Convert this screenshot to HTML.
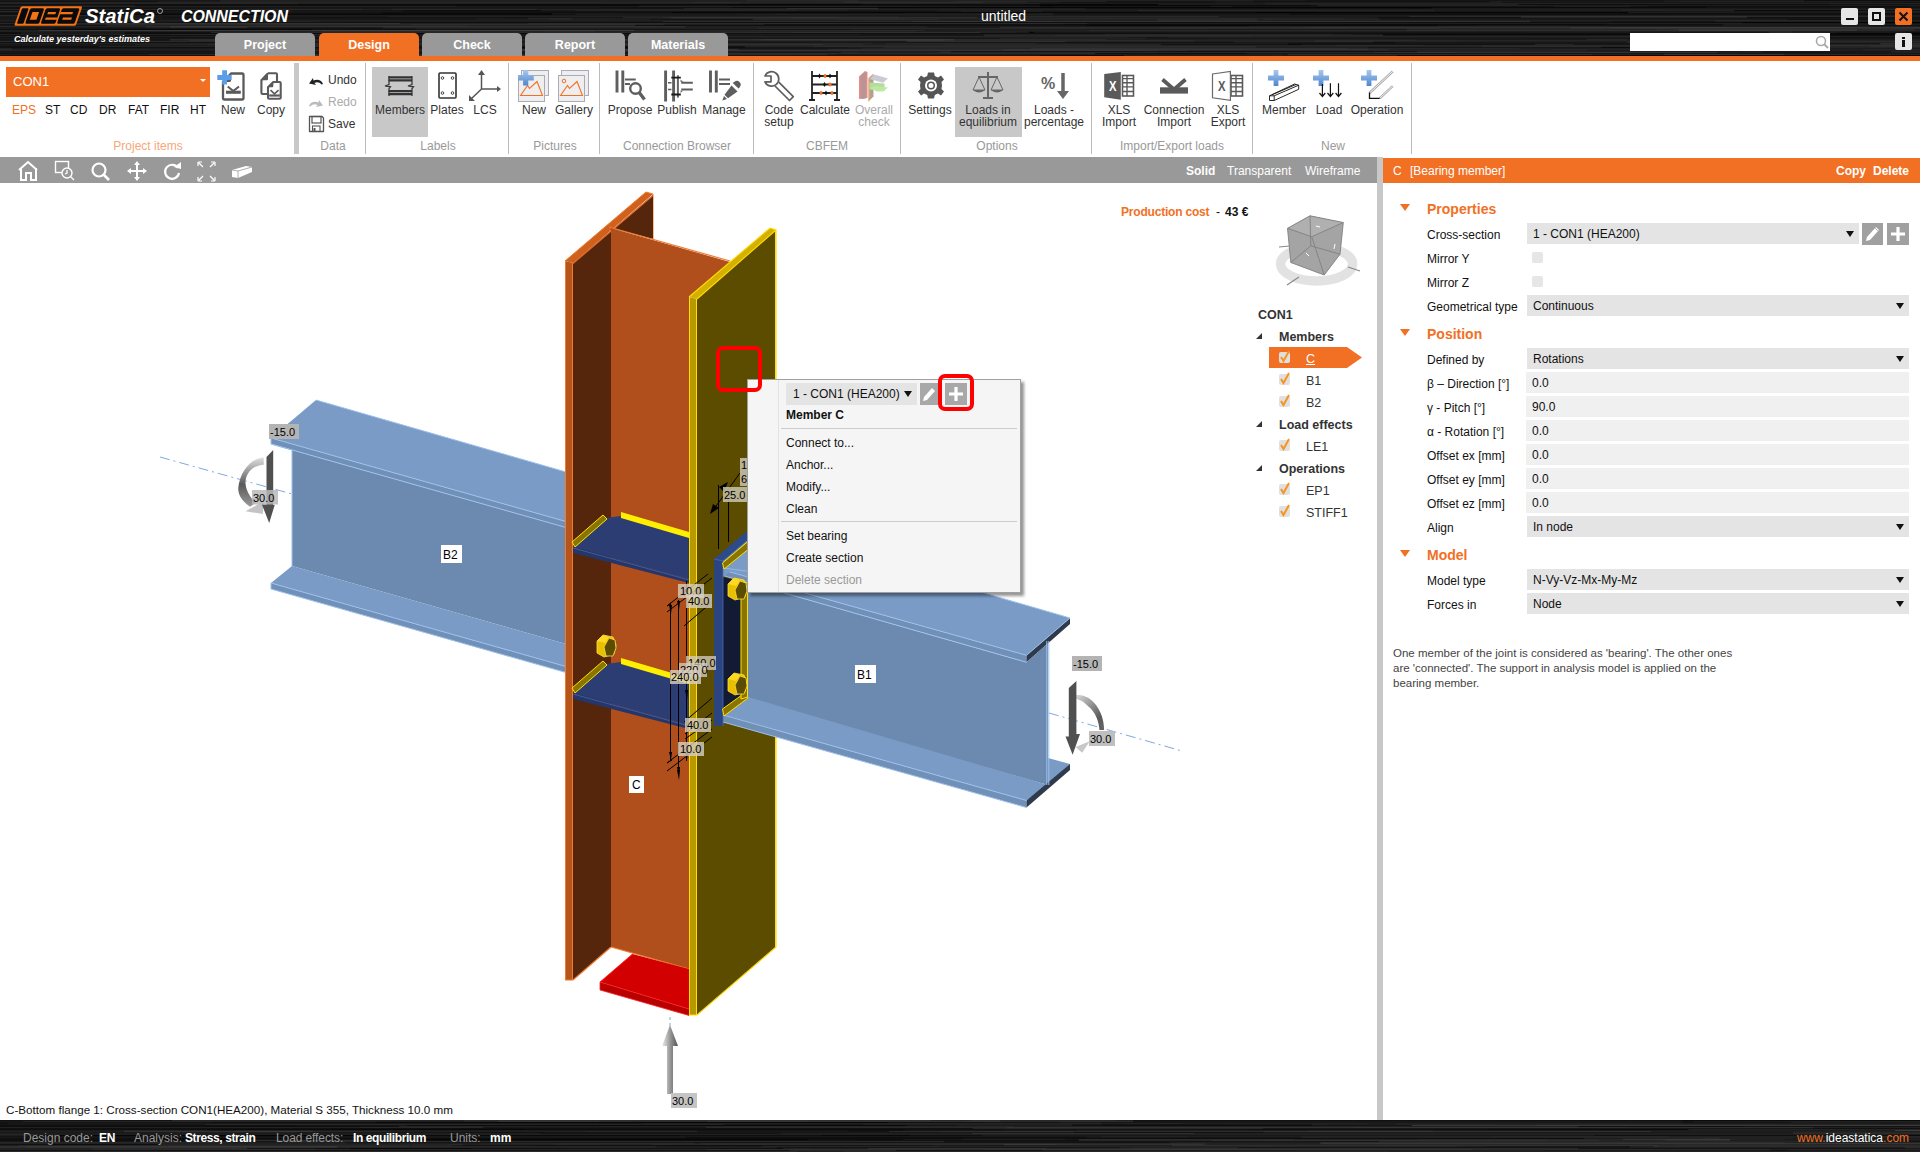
<!DOCTYPE html>
<html><head><meta charset="utf-8">
<style>
*{margin:0;padding:0;box-sizing:border-box}
html,body{width:1920px;height:1152px;overflow:hidden;background:#fff;font-family:"Liberation Sans",sans-serif;position:relative}
.a{position:absolute}
.brushed{background-color:#1c1c1c;background-image:repeating-linear-gradient(180deg,rgba(255,255,255,0.05) 0px,rgba(255,255,255,0.0) 2px,rgba(0,0,0,0.25) 3px,rgba(255,255,255,0.07) 5px,rgba(0,0,0,0.1) 7px,rgba(255,255,255,0.03) 9px,rgba(0,0,0,0.2) 11px,rgba(255,255,255,0.06) 13px)}
#title{left:0;top:0;width:1920px;height:56px}
#oline{left:0;top:56px;width:1920px;height:5px;background:#f17024}
.tab{top:33px;height:23px;width:100px;border-radius:5px 5px 0 0;background:#999;color:#fff;font-weight:bold;font-size:12.5px;text-align:center;line-height:24px}
.tab.on{background:#f17024}
.rb{font-size:12px;color:#333;text-align:center;line-height:12px;white-space:nowrap}
.rb.dis{color:#aaa}
.grp{top:139px;font-size:12px;color:#999;text-align:center;white-space:nowrap;line-height:14px}
.sep{top:63px;width:1px;height:91px;background:#bbb}
.hl{background:#c8c8c8}
#vtb{left:0;top:157px;width:1377px;height:26px;background:#999}
#split{left:1377px;top:157px;width:6px;height:963px;background:#c8c8c8}
#phead{left:1383px;top:158px;width:537px;height:25px;background:#f17024;color:#fff;font-size:12.5px;line-height:25px}
.lbl{font-size:12px;color:#111;line-height:14px;white-space:nowrap}
.fld{left:1527px;width:382px;height:21px;background:#e4e4e4;font-size:12px;color:#111;line-height:23px;padding-left:6px}
.fld.t{background:#f0f0f0;left:1526px;width:383px;padding-left:6px}
.sec{font-size:14px;font-weight:bold;color:#f17024;line-height:16px}
.tri{width:0;height:0;border-left:5px solid transparent;border-right:5px solid transparent;border-top:7px solid #f17024}
.dd{width:0;height:0;border-left:4px solid transparent;border-right:4px solid transparent;border-top:6px solid #111}
#status{left:0;top:1120px;width:1920px;height:32px}
</style></head><body>

<div id="title" class="a brushed"><svg class="a" style="left:0;top:0" width="1920" height="56"><rect width="1920" height="56" fill="#161616"/><rect y="0" width="1920" height="1" fill="rgb(24,24,24)"/><rect y="1" width="1920" height="1" fill="rgb(18,18,18)"/><rect y="2" width="1920" height="1" fill="rgb(26,26,26)"/><rect y="3" width="1920" height="1" fill="rgb(34,34,34)"/><rect y="4" width="1920" height="1" fill="rgb(15,15,15)"/><rect y="5" width="1920" height="1" fill="rgb(16,16,16)"/><rect y="6" width="1920" height="1" fill="rgb(31,31,31)"/><rect y="7" width="1920" height="1" fill="rgb(17,17,17)"/><rect y="8" width="1920" height="1" fill="rgb(25,25,25)"/><rect y="9" width="1920" height="1" fill="rgb(32,32,32)"/><rect y="10" width="1920" height="1" fill="rgb(15,15,15)"/><rect y="11" width="1920" height="1" fill="rgb(30,30,30)"/><rect y="12" width="1920" height="1" fill="rgb(20,20,20)"/><rect y="13" width="1920" height="1" fill="rgb(15,15,15)"/><rect y="14" width="1920" height="1" fill="rgb(16,16,16)"/><rect y="15" width="1920" height="1" fill="rgb(27,27,27)"/><rect y="16" width="1920" height="1" fill="rgb(27,27,27)"/><rect y="17" width="1920" height="1" fill="rgb(16,16,16)"/><rect y="18" width="1920" height="1" fill="rgb(21,21,21)"/><rect y="19" width="1920" height="1" fill="rgb(16,16,16)"/><rect y="20" width="1920" height="1" fill="rgb(31,31,31)"/><rect y="21" width="1920" height="1" fill="rgb(27,27,27)"/><rect y="22" width="1920" height="1" fill="rgb(15,15,15)"/><rect y="23" width="1920" height="1" fill="rgb(32,32,32)"/><rect y="24" width="1920" height="1" fill="rgb(17,17,17)"/><rect y="25" width="1920" height="1" fill="rgb(21,21,21)"/><rect y="26" width="1920" height="1" fill="rgb(34,34,34)"/><rect y="27" width="1920" height="1" fill="rgb(34,34,34)"/><rect y="28" width="1920" height="1" fill="rgb(32,32,32)"/><rect y="29" width="1920" height="1" fill="rgb(15,15,15)"/><rect y="30" width="1920" height="1" fill="rgb(32,32,32)"/><rect y="31" width="1920" height="1" fill="rgb(32,32,32)"/><rect y="32" width="1920" height="1" fill="rgb(26,26,26)"/><rect y="33" width="1920" height="1" fill="rgb(15,15,15)"/><rect y="34" width="1920" height="1" fill="rgb(21,21,21)"/><rect y="35" width="1920" height="1" fill="rgb(15,15,15)"/><rect y="36" width="1920" height="1" fill="rgb(31,31,31)"/><rect y="37" width="1920" height="1" fill="rgb(18,18,18)"/><rect y="38" width="1920" height="1" fill="rgb(23,23,23)"/><rect y="39" width="1920" height="1" fill="rgb(27,27,27)"/><rect y="40" width="1920" height="1" fill="rgb(18,18,18)"/><rect y="41" width="1920" height="1" fill="rgb(31,31,31)"/><rect y="42" width="1920" height="1" fill="rgb(17,17,17)"/><rect y="43" width="1920" height="1" fill="rgb(32,32,32)"/><rect y="44" width="1920" height="1" fill="rgb(23,23,23)"/><rect y="45" width="1920" height="1" fill="rgb(31,31,31)"/><rect y="46" width="1920" height="1" fill="rgb(19,19,19)"/><rect y="47" width="1920" height="1" fill="rgb(17,17,17)"/><rect y="48" width="1920" height="1" fill="rgb(32,32,32)"/><rect y="49" width="1920" height="1" fill="rgb(32,32,32)"/><rect y="50" width="1920" height="1" fill="rgb(34,34,34)"/><rect y="51" width="1920" height="1" fill="rgb(20,20,20)"/><rect y="52" width="1920" height="1" fill="rgb(25,25,25)"/><rect y="53" width="1920" height="1" fill="rgb(17,17,17)"/><rect y="54" width="1920" height="1" fill="rgb(31,31,31)"/><rect y="55" width="1920" height="1" fill="rgb(16,16,16)"/><path d="M643,36.1 h608" stroke="rgb(50,50,50)" stroke-opacity="0.49" stroke-width="1"/><path d="M1656,29.6 h470" stroke="rgb(60,60,60)" stroke-opacity="0.36" stroke-width="0.8"/><path d="M135,44.8 h688" stroke="rgb(60,60,60)" stroke-opacity="0.49" stroke-width="1"/><path d="M99,46.4 h220" stroke="rgb(80,80,80)" stroke-opacity="0.44" stroke-width="1"/><path d="M1527,9.9 h140" stroke="rgb(50,50,50)" stroke-opacity="0.28" stroke-width="1"/><path d="M1834,21.7 h693" stroke="rgb(70,70,70)" stroke-opacity="0.28" stroke-width="0.6"/><path d="M66,17.5 h162" stroke="rgb(50,50,50)" stroke-opacity="0.57" stroke-width="1.2"/><path d="M1221,18.7 h123" stroke="rgb(70,70,70)" stroke-opacity="0.41" stroke-width="0.6"/><path d="M977,31.1 h232" stroke="rgb(50,50,50)" stroke-opacity="0.36" stroke-width="1.2"/><path d="M481,55.5 h559" stroke="rgb(70,70,70)" stroke-opacity="0.50" stroke-width="0.8"/><path d="M940,52.4 h823" stroke="rgb(70,70,70)" stroke-opacity="0.69" stroke-width="1.2"/><path d="M521,14.2 h254" stroke="rgb(0,0,0)" stroke-opacity="0.55" stroke-width="0.6"/><path d="M546,31.8 h369" stroke="rgb(60,60,60)" stroke-opacity="0.25" stroke-width="1.2"/><path d="M1105,34.4 h228" stroke="rgb(50,50,50)" stroke-opacity="0.64" stroke-width="0.6"/><path d="M1407,29.9 h507" stroke="rgb(70,70,70)" stroke-opacity="0.43" stroke-width="1.2"/><path d="M580,40.4 h168" stroke="rgb(0,0,0)" stroke-opacity="0.45" stroke-width="0.6"/><path d="M219,21.6 h100" stroke="rgb(80,80,80)" stroke-opacity="0.32" stroke-width="0.6"/><path d="M88,23.6 h312" stroke="rgb(80,80,80)" stroke-opacity="0.42" stroke-width="1"/><path d="M1742,22.6 h225" stroke="rgb(0,0,0)" stroke-opacity="0.63" stroke-width="1.2"/><path d="M151,30.5 h247" stroke="rgb(0,0,0)" stroke-opacity="0.59" stroke-width="1"/><path d="M461,30.8 h628" stroke="rgb(0,0,0)" stroke-opacity="0.34" stroke-width="1"/><path d="M-90,9.7 h876" stroke="rgb(80,80,80)" stroke-opacity="0.38" stroke-width="0.6"/><path d="M1302,44.8 h271" stroke="rgb(60,60,60)" stroke-opacity="0.60" stroke-width="1"/><path d="M599,40.2 h345" stroke="rgb(70,70,70)" stroke-opacity="0.58" stroke-width="0.8"/><path d="M1256,12.5 h848" stroke="rgb(0,0,0)" stroke-opacity="0.70" stroke-width="1"/><path d="M1210,30.3 h557" stroke="rgb(50,50,50)" stroke-opacity="0.69" stroke-width="1"/><path d="M729,5.2 h581" stroke="rgb(0,0,0)" stroke-opacity="0.40" stroke-width="1.2"/><path d="M-193,40.0 h590" stroke="rgb(50,50,50)" stroke-opacity="0.40" stroke-width="0.6"/><path d="M1391,53.7 h828" stroke="rgb(0,0,0)" stroke-opacity="0.47" stroke-width="0.8"/><path d="M1161,27.8 h188" stroke="rgb(50,50,50)" stroke-opacity="0.43" stroke-width="1.2"/><path d="M450,47.9 h274" stroke="rgb(0,0,0)" stroke-opacity="0.26" stroke-width="1.2"/><path d="M1742,51.7 h773" stroke="rgb(60,60,60)" stroke-opacity="0.32" stroke-width="0.8"/><path d="M220,1.0 h639" stroke="rgb(50,50,50)" stroke-opacity="0.67" stroke-width="1.2"/><path d="M664,55.2 h128" stroke="rgb(60,60,60)" stroke-opacity="0.35" stroke-width="0.8"/><path d="M862,48.6 h657" stroke="rgb(70,70,70)" stroke-opacity="0.63" stroke-width="0.6"/><path d="M1676,47.4 h778" stroke="rgb(80,80,80)" stroke-opacity="0.62" stroke-width="1.2"/><path d="M1854,52.9 h233" stroke="rgb(80,80,80)" stroke-opacity="0.32" stroke-width="0.6"/><path d="M550,55.4 h723" stroke="rgb(0,0,0)" stroke-opacity="0.60" stroke-width="0.8"/><path d="M292,11.1 h669" stroke="rgb(0,0,0)" stroke-opacity="0.40" stroke-width="1.2"/><path d="M32,50.8 h354" stroke="rgb(0,0,0)" stroke-opacity="0.37" stroke-width="0.6"/><path d="M-86,32.5 h878" stroke="rgb(0,0,0)" stroke-opacity="0.45" stroke-width="0.8"/><path d="M1881,44.3 h646" stroke="rgb(70,70,70)" stroke-opacity="0.48" stroke-width="0.8"/><path d="M863,44.5 h672" stroke="rgb(0,0,0)" stroke-opacity="0.63" stroke-width="0.8"/><path d="M1610,26.1 h423" stroke="rgb(0,0,0)" stroke-opacity="0.55" stroke-width="1.2"/><path d="M1040,4.2 h225" stroke="rgb(0,0,0)" stroke-opacity="0.67" stroke-width="1"/><path d="M362,9.3 h578" stroke="rgb(0,0,0)" stroke-opacity="0.59" stroke-width="0.6"/><path d="M466,25.9 h783" stroke="rgb(0,0,0)" stroke-opacity="0.32" stroke-width="1.2"/><path d="M1525,32.4 h300" stroke="rgb(60,60,60)" stroke-opacity="0.39" stroke-width="1"/><path d="M1678,1.3 h551" stroke="rgb(50,50,50)" stroke-opacity="0.26" stroke-width="1"/><path d="M1898,33.6 h165" stroke="rgb(0,0,0)" stroke-opacity="0.69" stroke-width="0.8"/><path d="M913,6.1 h140" stroke="rgb(0,0,0)" stroke-opacity="0.37" stroke-width="0.8"/><path d="M859,52.4 h515" stroke="rgb(0,0,0)" stroke-opacity="0.49" stroke-width="1.2"/><path d="M943,44.3 h158" stroke="rgb(50,50,50)" stroke-opacity="0.33" stroke-width="0.6"/><path d="M162,17.9 h366" stroke="rgb(0,0,0)" stroke-opacity="0.52" stroke-width="0.8"/><path d="M298,4.3 h564" stroke="rgb(0,0,0)" stroke-opacity="0.40" stroke-width="1.2"/><path d="M-24,17.6 h639" stroke="rgb(50,50,50)" stroke-opacity="0.36" stroke-width="0.6"/><path d="M541,10.3 h306" stroke="rgb(60,60,60)" stroke-opacity="0.53" stroke-width="0.8"/><path d="M528,18.4 h377" stroke="rgb(60,60,60)" stroke-opacity="0.61" stroke-width="1"/><path d="M1871,2.0 h664" stroke="rgb(0,0,0)" stroke-opacity="0.48" stroke-width="0.8"/><path d="M1570,28.1 h772" stroke="rgb(70,70,70)" stroke-opacity="0.50" stroke-width="1.2"/><path d="M681,32.3 h335" stroke="rgb(60,60,60)" stroke-opacity="0.34" stroke-width="0.8"/><path d="M22,26.0 h232" stroke="rgb(0,0,0)" stroke-opacity="0.28" stroke-width="1"/><path d="M146,27.2 h781" stroke="rgb(70,70,70)" stroke-opacity="0.64" stroke-width="1"/><path d="M1000,38.2 h146" stroke="rgb(70,70,70)" stroke-opacity="0.33" stroke-width="1"/><path d="M1291,28.0 h436" stroke="rgb(80,80,80)" stroke-opacity="0.40" stroke-width="0.6"/><path d="M549,19.2 h101" stroke="rgb(60,60,60)" stroke-opacity="0.42" stroke-width="1.2"/><path d="M623,17.5 h354" stroke="rgb(80,80,80)" stroke-opacity="0.60" stroke-width="0.6"/><path d="M389,16.8 h509" stroke="rgb(80,80,80)" stroke-opacity="0.27" stroke-width="0.6"/><path d="M753,19.3 h186" stroke="rgb(80,80,80)" stroke-opacity="0.68" stroke-width="0.8"/><path d="M1395,42.9 h882" stroke="rgb(60,60,60)" stroke-opacity="0.57" stroke-width="1.2"/><path d="M392,9.3 h144" stroke="rgb(50,50,50)" stroke-opacity="0.65" stroke-width="1.2"/><path d="M1870,46.7 h242" stroke="rgb(80,80,80)" stroke-opacity="0.59" stroke-width="0.6"/><path d="M741,52.7 h187" stroke="rgb(0,0,0)" stroke-opacity="0.27" stroke-width="1"/><path d="M1648,6.4 h671" stroke="rgb(0,0,0)" stroke-opacity="0.53" stroke-width="0.8"/><path d="M1671,31.3 h171" stroke="rgb(50,50,50)" stroke-opacity="0.67" stroke-width="0.6"/><path d="M1740,42.5 h358" stroke="rgb(0,0,0)" stroke-opacity="0.63" stroke-width="0.8"/><path d="M745,46.8 h857" stroke="rgb(50,50,50)" stroke-opacity="0.69" stroke-width="1.2"/><path d="M1762,54.4 h800" stroke="rgb(60,60,60)" stroke-opacity="0.60" stroke-width="0.8"/><path d="M1158,4.6 h360" stroke="rgb(50,50,50)" stroke-opacity="0.58" stroke-width="1"/><path d="M-149,39.6 h593" stroke="rgb(0,0,0)" stroke-opacity="0.47" stroke-width="0.6"/><path d="M1805,44.2 h397" stroke="rgb(50,50,50)" stroke-opacity="0.48" stroke-width="1.2"/><path d="M285,29.5 h662" stroke="rgb(0,0,0)" stroke-opacity="0.39" stroke-width="0.6"/><path d="M1679,30.0 h178" stroke="rgb(80,80,80)" stroke-opacity="0.69" stroke-width="1.2"/><path d="M663,17.4 h176" stroke="rgb(80,80,80)" stroke-opacity="0.29" stroke-width="1"/><path d="M1883,23.1 h386" stroke="rgb(0,0,0)" stroke-opacity="0.57" stroke-width="0.8"/><path d="M1791,31.9 h503" stroke="rgb(0,0,0)" stroke-opacity="0.32" stroke-width="1.2"/><path d="M1036,43.5 h844" stroke="rgb(0,0,0)" stroke-opacity="0.44" stroke-width="1.2"/><path d="M1157,20.1 h101" stroke="rgb(60,60,60)" stroke-opacity="0.59" stroke-width="1.2"/><path d="M601,7.9 h830" stroke="rgb(0,0,0)" stroke-opacity="0.66" stroke-width="1"/><path d="M1409,16.4 h499" stroke="rgb(80,80,80)" stroke-opacity="0.28" stroke-width="1.2"/><path d="M-3,48.3 h387" stroke="rgb(0,0,0)" stroke-opacity="0.27" stroke-width="1"/><path d="M821,40.9 h372" stroke="rgb(70,70,70)" stroke-opacity="0.48" stroke-width="0.8"/><path d="M1552,49.4 h129" stroke="rgb(50,50,50)" stroke-opacity="0.43" stroke-width="0.8"/><path d="M1482,46.1 h561" stroke="rgb(80,80,80)" stroke-opacity="0.59" stroke-width="1"/><path d="M321,31.0 h274" stroke="rgb(70,70,70)" stroke-opacity="0.44" stroke-width="1"/><path d="M865,19.3 h515" stroke="rgb(50,50,50)" stroke-opacity="0.36" stroke-width="1.2"/><path d="M290,35.7 h271" stroke="rgb(50,50,50)" stroke-opacity="0.32" stroke-width="0.8"/><path d="M1836,32.9 h663" stroke="rgb(0,0,0)" stroke-opacity="0.45" stroke-width="1"/><path d="M371,48.4 h660" stroke="rgb(0,0,0)" stroke-opacity="0.36" stroke-width="0.8"/><path d="M1107,21.6 h344" stroke="rgb(60,60,60)" stroke-opacity="0.37" stroke-width="0.8"/><path d="M1490,1.7 h492" stroke="rgb(70,70,70)" stroke-opacity="0.59" stroke-width="0.8"/><path d="M54,24.3 h610" stroke="rgb(60,60,60)" stroke-opacity="0.51" stroke-width="1"/><path d="M684,8.7 h194" stroke="rgb(60,60,60)" stroke-opacity="0.65" stroke-width="1.2"/><path d="M1568,25.6 h419" stroke="rgb(0,0,0)" stroke-opacity="0.31" stroke-width="1.2"/><path d="M1738,45.8 h701" stroke="rgb(70,70,70)" stroke-opacity="0.25" stroke-width="1.2"/><path d="M1717,52.5 h559" stroke="rgb(0,0,0)" stroke-opacity="0.60" stroke-width="0.8"/><path d="M246,9.2 h839" stroke="rgb(50,50,50)" stroke-opacity="0.54" stroke-width="1.2"/><path d="M-39,5.6 h101" stroke="rgb(0,0,0)" stroke-opacity="0.35" stroke-width="0.6"/><path d="M324,41.7 h741" stroke="rgb(60,60,60)" stroke-opacity="0.49" stroke-width="1.2"/><path d="M207,44.8 h172" stroke="rgb(60,60,60)" stroke-opacity="0.49" stroke-width="0.8"/><path d="M-196,24.3 h110" stroke="rgb(80,80,80)" stroke-opacity="0.39" stroke-width="1.2"/><path d="M792,18.0 h586" stroke="rgb(80,80,80)" stroke-opacity="0.36" stroke-width="0.8"/><path d="M1059,2.0 h156" stroke="rgb(0,0,0)" stroke-opacity="0.34" stroke-width="1.2"/><path d="M1538,5.3 h479" stroke="rgb(0,0,0)" stroke-opacity="0.47" stroke-width="1"/><path d="M1423,45.4 h302" stroke="rgb(0,0,0)" stroke-opacity="0.61" stroke-width="0.6"/><path d="M620,13.5 h419" stroke="rgb(0,0,0)" stroke-opacity="0.35" stroke-width="0.8"/><path d="M1008,16.8 h211" stroke="rgb(80,80,80)" stroke-opacity="0.47" stroke-width="0.8"/><path d="M31,14.5 h709" stroke="rgb(0,0,0)" stroke-opacity="0.66" stroke-width="0.6"/><path d="M381,13.0 h525" stroke="rgb(0,0,0)" stroke-opacity="0.57" stroke-width="0.8"/><path d="M1086,25.4 h850" stroke="rgb(0,0,0)" stroke-opacity="0.70" stroke-width="0.8"/><path d="M1715,21.2 h132" stroke="rgb(60,60,60)" stroke-opacity="0.55" stroke-width="1.2"/><path d="M1158,53.4 h553" stroke="rgb(0,0,0)" stroke-opacity="0.30" stroke-width="0.6"/><path d="M1521,17.1 h226" stroke="rgb(80,80,80)" stroke-opacity="0.68" stroke-width="0.8"/><path d="M1064,24.4 h542" stroke="rgb(0,0,0)" stroke-opacity="0.27" stroke-width="1.2"/><path d="M1628,12.4 h297" stroke="rgb(60,60,60)" stroke-opacity="0.41" stroke-width="1.2"/><path d="M815,1.6 h740" stroke="rgb(70,70,70)" stroke-opacity="0.27" stroke-width="0.6"/><path d="M53,29.1 h363" stroke="rgb(0,0,0)" stroke-opacity="0.59" stroke-width="1"/><path d="M-22,23.3 h368" stroke="rgb(50,50,50)" stroke-opacity="0.57" stroke-width="1"/><path d="M67,17.3 h124" stroke="rgb(0,0,0)" stroke-opacity="0.30" stroke-width="1.2"/><path d="M828,49.4 h540" stroke="rgb(70,70,70)" stroke-opacity="0.31" stroke-width="1.2"/><path d="M1042,11.0 h808" stroke="rgb(0,0,0)" stroke-opacity="0.52" stroke-width="1"/><path d="M1282,55.3 h710" stroke="rgb(0,0,0)" stroke-opacity="0.48" stroke-width="1.2"/><path d="M1470,48.2 h166" stroke="rgb(50,50,50)" stroke-opacity="0.27" stroke-width="1"/><path d="M230,11.0 h173" stroke="rgb(60,60,60)" stroke-opacity="0.53" stroke-width="0.8"/><path d="M1630,6.4 h277" stroke="rgb(0,0,0)" stroke-opacity="0.31" stroke-width="1.2"/><path d="M762,39.9 h865" stroke="rgb(80,80,80)" stroke-opacity="0.63" stroke-width="0.6"/><path d="M1003,49.8 h386" stroke="rgb(80,80,80)" stroke-opacity="0.37" stroke-width="1"/><path d="M1599,47.3 h353" stroke="rgb(0,0,0)" stroke-opacity="0.36" stroke-width="0.8"/><path d="M571,18.9 h434" stroke="rgb(0,0,0)" stroke-opacity="0.43" stroke-width="0.8"/><path d="M211,32.5 h769" stroke="rgb(70,70,70)" stroke-opacity="0.70" stroke-width="0.6"/><path d="M746,0.5 h559" stroke="rgb(60,60,60)" stroke-opacity="0.27" stroke-width="1"/><path d="M576,14.1 h714" stroke="rgb(80,80,80)" stroke-opacity="0.34" stroke-width="0.6"/><path d="M528,23.5 h559" stroke="rgb(80,80,80)" stroke-opacity="0.37" stroke-width="0.6"/><path d="M1232,6.6 h322" stroke="rgb(0,0,0)" stroke-opacity="0.42" stroke-width="0.8"/><path d="M844,2.2 h139" stroke="rgb(80,80,80)" stroke-opacity="0.58" stroke-width="0.8"/><path d="M1140,52.0 h518" stroke="rgb(50,50,50)" stroke-opacity="0.42" stroke-width="1"/><path d="M1830,4.2 h661" stroke="rgb(70,70,70)" stroke-opacity="0.28" stroke-width="0.6"/><path d="M433,50.4 h754" stroke="rgb(80,80,80)" stroke-opacity="0.29" stroke-width="0.8"/><path d="M1478,25.7 h390" stroke="rgb(50,50,50)" stroke-opacity="0.39" stroke-width="0.6"/><path d="M1263,19.7 h524" stroke="rgb(70,70,70)" stroke-opacity="0.26" stroke-width="1"/><path d="M1458,41.2 h308" stroke="rgb(0,0,0)" stroke-opacity="0.45" stroke-width="0.8"/><path d="M170,27.1 h515" stroke="rgb(80,80,80)" stroke-opacity="0.65" stroke-width="1.2"/><path d="M-140,49.2 h152" stroke="rgb(80,80,80)" stroke-opacity="0.31" stroke-width="1.2"/><path d="M1318,5.6 h854" stroke="rgb(80,80,80)" stroke-opacity="0.33" stroke-width="1"/><path d="M503,18.2 h168" stroke="rgb(0,0,0)" stroke-opacity="0.42" stroke-width="0.8"/><path d="M-22,19.1 h594" stroke="rgb(60,60,60)" stroke-opacity="0.27" stroke-width="1.2"/><path d="M456,5.9 h755" stroke="rgb(0,0,0)" stroke-opacity="0.53" stroke-width="0.8"/><path d="M693,53.5 h142" stroke="rgb(70,70,70)" stroke-opacity="0.67" stroke-width="0.8"/><path d="M412,24.4 h352" stroke="rgb(50,50,50)" stroke-opacity="0.62" stroke-width="0.8"/><path d="M-44,2.9 h783" stroke="rgb(60,60,60)" stroke-opacity="0.30" stroke-width="1.2"/><path d="M1054,35.8 h764" stroke="rgb(70,70,70)" stroke-opacity="0.39" stroke-width="0.8"/><path d="M1305,27.4 h557" stroke="rgb(80,80,80)" stroke-opacity="0.45" stroke-width="0.6"/><path d="M1804,0.6 h576" stroke="rgb(0,0,0)" stroke-opacity="0.45" stroke-width="1.2"/><path d="M1738,53.2 h509" stroke="rgb(0,0,0)" stroke-opacity="0.28" stroke-width="1"/><path d="M1610,27.4 h616" stroke="rgb(80,80,80)" stroke-opacity="0.55" stroke-width="0.6"/><path d="M1085,40.1 h896" stroke="rgb(50,50,50)" stroke-opacity="0.48" stroke-width="0.6"/><path d="M1347,48.5 h768" stroke="rgb(0,0,0)" stroke-opacity="0.26" stroke-width="0.6"/><path d="M248,39.7 h298" stroke="rgb(0,0,0)" stroke-opacity="0.69" stroke-width="1.2"/><path d="M476,19.0 h802" stroke="rgb(50,50,50)" stroke-opacity="0.67" stroke-width="0.6"/><path d="M833,53.4 h262" stroke="rgb(60,60,60)" stroke-opacity="0.65" stroke-width="1"/><path d="M841,52.5 h614" stroke="rgb(70,70,70)" stroke-opacity="0.34" stroke-width="1"/><path d="M1106,39.5 h481" stroke="rgb(0,0,0)" stroke-opacity="0.34" stroke-width="1.2"/><path d="M939,10.6 h795" stroke="rgb(60,60,60)" stroke-opacity="0.65" stroke-width="0.8"/><path d="M271,50.8 h886" stroke="rgb(80,80,80)" stroke-opacity="0.27" stroke-width="1"/><path d="M228,55.5 h358" stroke="rgb(80,80,80)" stroke-opacity="0.53" stroke-width="1.2"/><path d="M884,47.8 h484" stroke="rgb(60,60,60)" stroke-opacity="0.51" stroke-width="1"/><path d="M1611,21.8 h335" stroke="rgb(0,0,0)" stroke-opacity="0.53" stroke-width="0.6"/><path d="M838,18.8 h417" stroke="rgb(50,50,50)" stroke-opacity="0.68" stroke-width="1"/><path d="M-62,46.0 h326" stroke="rgb(0,0,0)" stroke-opacity="0.38" stroke-width="1.2"/><path d="M-5,26.5 h235" stroke="rgb(70,70,70)" stroke-opacity="0.35" stroke-width="0.6"/><path d="M1253,1.1 h411" stroke="rgb(0,0,0)" stroke-opacity="0.49" stroke-width="0.8"/><path d="M347,26.6 h309" stroke="rgb(60,60,60)" stroke-opacity="0.53" stroke-width="1.2"/><path d="M797,10.1 h824" stroke="rgb(0,0,0)" stroke-opacity="0.45" stroke-width="0.6"/><path d="M904,40.1 h511" stroke="rgb(60,60,60)" stroke-opacity="0.69" stroke-width="0.6"/><path d="M1234,41.8 h708" stroke="rgb(50,50,50)" stroke-opacity="0.51" stroke-width="1.2"/><path d="M-199,15.2 h145" stroke="rgb(0,0,0)" stroke-opacity="0.49" stroke-width="1.2"/><path d="M39,11.2 h897" stroke="rgb(0,0,0)" stroke-opacity="0.26" stroke-width="0.8"/><path d="M1876,9.4 h763" stroke="rgb(50,50,50)" stroke-opacity="0.44" stroke-width="0.8"/><path d="M1029,32.3 h740" stroke="rgb(0,0,0)" stroke-opacity="0.70" stroke-width="1.2"/><path d="M1336,45.5 h547" stroke="rgb(50,50,50)" stroke-opacity="0.66" stroke-width="0.6"/><path d="M518,47.7 h331" stroke="rgb(0,0,0)" stroke-opacity="0.37" stroke-width="0.6"/><path d="M878,7.3 h828" stroke="rgb(0,0,0)" stroke-opacity="0.37" stroke-width="1.2"/><path d="M886,43.8 h402" stroke="rgb(50,50,50)" stroke-opacity="0.67" stroke-width="0.8"/><path d="M-138,5.9 h273" stroke="rgb(60,60,60)" stroke-opacity="0.66" stroke-width="0.8"/><path d="M1138,10.7 h296" stroke="rgb(70,70,70)" stroke-opacity="0.40" stroke-width="0.8"/><path d="M1723,24.9 h583" stroke="rgb(80,80,80)" stroke-opacity="0.56" stroke-width="0.6"/><path d="M757,28.0 h684" stroke="rgb(60,60,60)" stroke-opacity="0.61" stroke-width="1.2"/><path d="M502,39.6 h248" stroke="rgb(0,0,0)" stroke-opacity="0.26" stroke-width="0.6"/><path d="M1212,39.9 h245" stroke="rgb(50,50,50)" stroke-opacity="0.26" stroke-width="0.6"/><path d="M-26,8.7 h813" stroke="rgb(0,0,0)" stroke-opacity="0.58" stroke-width="0.6"/><path d="M1288,54.6 h304" stroke="rgb(80,80,80)" stroke-opacity="0.65" stroke-width="0.6"/><path d="M1372,55.8 h209" stroke="rgb(0,0,0)" stroke-opacity="0.34" stroke-width="0.6"/><path d="M158,2.0 h869" stroke="rgb(50,50,50)" stroke-opacity="0.53" stroke-width="1.2"/><path d="M639,6.1 h401" stroke="rgb(60,60,60)" stroke-opacity="0.40" stroke-width="1"/><path d="M957,1.4 h149" stroke="rgb(50,50,50)" stroke-opacity="0.59" stroke-width="1"/><path d="M1863,50.0 h587" stroke="rgb(60,60,60)" stroke-opacity="0.53" stroke-width="0.6"/><path d="M1587,50.4 h631" stroke="rgb(0,0,0)" stroke-opacity="0.41" stroke-width="0.6"/><path d="M172,34.6 h688" stroke="rgb(60,60,60)" stroke-opacity="0.33" stroke-width="0.6"/><path d="M21,33.2 h104" stroke="rgb(60,60,60)" stroke-opacity="0.47" stroke-width="1.2"/><path d="M555,44.8 h606" stroke="rgb(80,80,80)" stroke-opacity="0.41" stroke-width="1"/><path d="M962,36.9 h319" stroke="rgb(50,50,50)" stroke-opacity="0.35" stroke-width="0.8"/><path d="M131,7.9 h602" stroke="rgb(50,50,50)" stroke-opacity="0.50" stroke-width="0.6"/><path d="M189,40.3 h510" stroke="rgb(70,70,70)" stroke-opacity="0.65" stroke-width="0.6"/><path d="M-97,27.9 h480" stroke="rgb(0,0,0)" stroke-opacity="0.39" stroke-width="1.2"/><path d="M1353,34.5 h745" stroke="rgb(0,0,0)" stroke-opacity="0.67" stroke-width="0.8"/><path d="M-62,34.6 h456" stroke="rgb(80,80,80)" stroke-opacity="0.40" stroke-width="0.8"/><path d="M1124,55.8 h273" stroke="rgb(70,70,70)" stroke-opacity="0.45" stroke-width="1"/><path d="M1168,37.2 h573" stroke="rgb(50,50,50)" stroke-opacity="0.65" stroke-width="0.8"/><path d="M1034,32.2 h872" stroke="rgb(50,50,50)" stroke-opacity="0.62" stroke-width="0.8"/><path d="M814,46.2 h840" stroke="rgb(60,60,60)" stroke-opacity="0.52" stroke-width="1"/><path d="M575,10.2 h364" stroke="rgb(50,50,50)" stroke-opacity="0.70" stroke-width="0.8"/><path d="M1373,42.1 h254" stroke="rgb(0,0,0)" stroke-opacity="0.61" stroke-width="1"/><path d="M247,27.3 h753" stroke="rgb(0,0,0)" stroke-opacity="0.38" stroke-width="1.2"/><path d="M1434,29.0 h547" stroke="rgb(50,50,50)" stroke-opacity="0.35" stroke-width="1"/><path d="M853,29.0 h718" stroke="rgb(50,50,50)" stroke-opacity="0.43" stroke-width="0.8"/><path d="M1525,54.4 h334" stroke="rgb(50,50,50)" stroke-opacity="0.57" stroke-width="0.8"/><path d="M308,43.2 h564" stroke="rgb(70,70,70)" stroke-opacity="0.39" stroke-width="0.6"/><path d="M1438,26.2 h830" stroke="rgb(50,50,50)" stroke-opacity="0.53" stroke-width="1"/><path d="M1664,54.4 h120" stroke="rgb(80,80,80)" stroke-opacity="0.64" stroke-width="0.8"/><path d="M-157,41.3 h498" stroke="rgb(70,70,70)" stroke-opacity="0.66" stroke-width="0.6"/><path d="M692,2.3 h264" stroke="rgb(50,50,50)" stroke-opacity="0.60" stroke-width="0.8"/><path d="M1670,33.3 h654" stroke="rgb(0,0,0)" stroke-opacity="0.57" stroke-width="0.6"/><path d="M1315,40.8 h634" stroke="rgb(60,60,60)" stroke-opacity="0.43" stroke-width="1.2"/><path d="M552,14.0 h501" stroke="rgb(80,80,80)" stroke-opacity="0.59" stroke-width="0.6"/><path d="M1256,47.0 h752" stroke="rgb(0,0,0)" stroke-opacity="0.36" stroke-width="1.2"/><path d="M107,25.1 h528" stroke="rgb(70,70,70)" stroke-opacity="0.53" stroke-width="1"/><path d="M719,37.3 h410" stroke="rgb(50,50,50)" stroke-opacity="0.43" stroke-width="0.8"/><path d="M1692,52.0 h317" stroke="rgb(0,0,0)" stroke-opacity="0.31" stroke-width="0.6"/><path d="M591,51.8 h580" stroke="rgb(50,50,50)" stroke-opacity="0.50" stroke-width="0.8"/><path d="M1246,53.0 h782" stroke="rgb(50,50,50)" stroke-opacity="0.62" stroke-width="1.2"/><path d="M312,30.0 h898" stroke="rgb(70,70,70)" stroke-opacity="0.41" stroke-width="0.8"/><path d="M838,17.7 h536" stroke="rgb(50,50,50)" stroke-opacity="0.33" stroke-width="0.6"/><path d="M951,51.7 h466" stroke="rgb(0,0,0)" stroke-opacity="0.54" stroke-width="1"/><path d="M149,30.5 h775" stroke="rgb(60,60,60)" stroke-opacity="0.32" stroke-width="1"/><path d="M149,54.4 h678" stroke="rgb(60,60,60)" stroke-opacity="0.60" stroke-width="0.8"/><path d="M-139,33.8 h773" stroke="rgb(0,0,0)" stroke-opacity="0.34" stroke-width="0.6"/><path d="M215,41.3 h692" stroke="rgb(0,0,0)" stroke-opacity="0.63" stroke-width="0.8"/><path d="M425,49.5 h313" stroke="rgb(70,70,70)" stroke-opacity="0.61" stroke-width="0.8"/><path d="M170,39.9 h784" stroke="rgb(80,80,80)" stroke-opacity="0.60" stroke-width="1"/><path d="M672,12.5 h643" stroke="rgb(0,0,0)" stroke-opacity="0.58" stroke-width="1.2"/><path d="M285,42.9 h370" stroke="rgb(70,70,70)" stroke-opacity="0.36" stroke-width="0.8"/><path d="M39,30.5 h595" stroke="rgb(70,70,70)" stroke-opacity="0.66" stroke-width="1.2"/><path d="M-173,15.5 h264" stroke="rgb(60,60,60)" stroke-opacity="0.46" stroke-width="1.2"/><path d="M1707,42.3 h483" stroke="rgb(70,70,70)" stroke-opacity="0.44" stroke-width="0.6"/><path d="M-84,11.6 h121" stroke="rgb(80,80,80)" stroke-opacity="0.27" stroke-width="1"/><path d="M1891,52.0 h595" stroke="rgb(70,70,70)" stroke-opacity="0.59" stroke-width="0.8"/><path d="M1502,2.2 h740" stroke="rgb(0,0,0)" stroke-opacity="0.40" stroke-width="1"/><path d="M663,21.5 h390" stroke="rgb(70,70,70)" stroke-opacity="0.40" stroke-width="1"/><path d="M984,35.1 h399" stroke="rgb(60,60,60)" stroke-opacity="0.62" stroke-width="1.2"/><path d="M912,21.5 h618" stroke="rgb(60,60,60)" stroke-opacity="0.69" stroke-width="1.2"/></svg></div>
<div id="oline" class="a"></div>

<!-- tabs -->
<div class="a tab" style="left:215px">Project</div>
<div class="a tab on" style="left:319px">Design</div>
<div class="a tab" style="left:422px">Check</div>
<div class="a tab" style="left:525px">Report</div>
<div class="a tab" style="left:628px">Materials</div>

<div class="a" style="left:981px;top:8px;color:#fff;font-size:14px">untitled</div>

<div id="vtb" class="a"></div>
<div id="split" class="a"></div>
<div id="phead" class="a"></div>

<div id="status" class="a brushed"><svg class="a" style="left:0;top:0" width="1920" height="32"><rect width="1920" height="32" fill="#161616"/><rect y="0" width="1920" height="1" fill="rgb(17,17,17)"/><rect y="1" width="1920" height="1" fill="rgb(24,24,24)"/><rect y="2" width="1920" height="1" fill="rgb(20,20,20)"/><rect y="3" width="1920" height="1" fill="rgb(24,24,24)"/><rect y="4" width="1920" height="1" fill="rgb(23,23,23)"/><rect y="5" width="1920" height="1" fill="rgb(18,18,18)"/><rect y="6" width="1920" height="1" fill="rgb(32,32,32)"/><rect y="7" width="1920" height="1" fill="rgb(34,34,34)"/><rect y="8" width="1920" height="1" fill="rgb(16,16,16)"/><rect y="9" width="1920" height="1" fill="rgb(15,15,15)"/><rect y="10" width="1920" height="1" fill="rgb(26,26,26)"/><rect y="11" width="1920" height="1" fill="rgb(31,31,31)"/><rect y="12" width="1920" height="1" fill="rgb(26,26,26)"/><rect y="13" width="1920" height="1" fill="rgb(31,31,31)"/><rect y="14" width="1920" height="1" fill="rgb(32,32,32)"/><rect y="15" width="1920" height="1" fill="rgb(15,15,15)"/><rect y="16" width="1920" height="1" fill="rgb(26,26,26)"/><rect y="17" width="1920" height="1" fill="rgb(23,23,23)"/><rect y="18" width="1920" height="1" fill="rgb(17,17,17)"/><rect y="19" width="1920" height="1" fill="rgb(14,14,14)"/><rect y="20" width="1920" height="1" fill="rgb(15,15,15)"/><rect y="21" width="1920" height="1" fill="rgb(20,20,20)"/><rect y="22" width="1920" height="1" fill="rgb(29,29,29)"/><rect y="23" width="1920" height="1" fill="rgb(33,33,33)"/><rect y="24" width="1920" height="1" fill="rgb(15,15,15)"/><rect y="25" width="1920" height="1" fill="rgb(30,30,30)"/><rect y="26" width="1920" height="1" fill="rgb(31,31,31)"/><rect y="27" width="1920" height="1" fill="rgb(33,33,33)"/><rect y="28" width="1920" height="1" fill="rgb(26,26,26)"/><rect y="29" width="1920" height="1" fill="rgb(33,33,33)"/><rect y="30" width="1920" height="1" fill="rgb(18,18,18)"/><rect y="31" width="1920" height="1" fill="rgb(34,34,34)"/><path d="M1675,5.2 h740" stroke="rgb(0,0,0)" stroke-opacity="0.30" stroke-width="0.8"/><path d="M212,2.4 h771" stroke="rgb(0,0,0)" stroke-opacity="0.42" stroke-width="0.8"/><path d="M856,19.6 h409" stroke="rgb(0,0,0)" stroke-opacity="0.44" stroke-width="1"/><path d="M23,1.4 h609" stroke="rgb(80,80,80)" stroke-opacity="0.48" stroke-width="0.6"/><path d="M1457,26.6 h557" stroke="rgb(0,0,0)" stroke-opacity="0.26" stroke-width="1.2"/><path d="M1489,9.5 h661" stroke="rgb(0,0,0)" stroke-opacity="0.29" stroke-width="1.2"/><path d="M-137,13.9 h537" stroke="rgb(0,0,0)" stroke-opacity="0.25" stroke-width="0.6"/><path d="M297,5.2 h232" stroke="rgb(70,70,70)" stroke-opacity="0.26" stroke-width="0.8"/><path d="M567,28.7 h151" stroke="rgb(60,60,60)" stroke-opacity="0.60" stroke-width="0.8"/><path d="M1840,5.3 h571" stroke="rgb(50,50,50)" stroke-opacity="0.67" stroke-width="1"/><path d="M-154,3.7 h162" stroke="rgb(0,0,0)" stroke-opacity="0.65" stroke-width="0.6"/><path d="M479,24.3 h598" stroke="rgb(80,80,80)" stroke-opacity="0.28" stroke-width="1"/><path d="M481,28.5 h248" stroke="rgb(0,0,0)" stroke-opacity="0.41" stroke-width="0.8"/><path d="M1654,26.5 h378" stroke="rgb(80,80,80)" stroke-opacity="0.40" stroke-width="1"/><path d="M1160,3.6 h720" stroke="rgb(50,50,50)" stroke-opacity="0.69" stroke-width="0.8"/><path d="M808,19.6 h485" stroke="rgb(70,70,70)" stroke-opacity="0.56" stroke-width="0.8"/><path d="M-194,28.3 h429" stroke="rgb(60,60,60)" stroke-opacity="0.37" stroke-width="0.8"/><path d="M376,2.3 h685" stroke="rgb(0,0,0)" stroke-opacity="0.37" stroke-width="1.2"/><path d="M1785,22.5 h490" stroke="rgb(0,0,0)" stroke-opacity="0.60" stroke-width="0.8"/><path d="M1419,19.6 h576" stroke="rgb(50,50,50)" stroke-opacity="0.34" stroke-width="1"/><path d="M1683,0.8 h653" stroke="rgb(0,0,0)" stroke-opacity="0.49" stroke-width="1"/><path d="M863,4.2 h634" stroke="rgb(60,60,60)" stroke-opacity="0.46" stroke-width="0.8"/><path d="M177,12.2 h285" stroke="rgb(50,50,50)" stroke-opacity="0.38" stroke-width="1"/><path d="M410,25.8 h352" stroke="rgb(0,0,0)" stroke-opacity="0.67" stroke-width="1.2"/><path d="M1322,23.9 h747" stroke="rgb(70,70,70)" stroke-opacity="0.60" stroke-width="0.8"/><path d="M1212,20.6 h387" stroke="rgb(80,80,80)" stroke-opacity="0.52" stroke-width="0.6"/><path d="M1791,2.2 h700" stroke="rgb(80,80,80)" stroke-opacity="0.35" stroke-width="1"/><path d="M1630,27.1 h885" stroke="rgb(80,80,80)" stroke-opacity="0.62" stroke-width="0.8"/><path d="M1187,16.8 h305" stroke="rgb(0,0,0)" stroke-opacity="0.42" stroke-width="0.6"/><path d="M1314,3.0 h822" stroke="rgb(70,70,70)" stroke-opacity="0.47" stroke-width="0.6"/><path d="M168,25.9 h363" stroke="rgb(60,60,60)" stroke-opacity="0.50" stroke-width="0.6"/><path d="M454,25.2 h479" stroke="rgb(0,0,0)" stroke-opacity="0.70" stroke-width="0.8"/><path d="M848,11.0 h460" stroke="rgb(0,0,0)" stroke-opacity="0.66" stroke-width="0.6"/><path d="M1902,3.3 h826" stroke="rgb(50,50,50)" stroke-opacity="0.54" stroke-width="1.2"/><path d="M1101,3.1 h873" stroke="rgb(0,0,0)" stroke-opacity="0.67" stroke-width="1"/><path d="M231,28.8 h582" stroke="rgb(60,60,60)" stroke-opacity="0.42" stroke-width="1.2"/><path d="M1355,7.4 h272" stroke="rgb(70,70,70)" stroke-opacity="0.36" stroke-width="0.8"/><path d="M599,0.5 h136" stroke="rgb(0,0,0)" stroke-opacity="0.67" stroke-width="0.8"/><path d="M1328,4.9 h867" stroke="rgb(0,0,0)" stroke-opacity="0.60" stroke-width="0.6"/><path d="M107,24.8 h563" stroke="rgb(60,60,60)" stroke-opacity="0.40" stroke-width="0.8"/><path d="M1299,30.1 h246" stroke="rgb(60,60,60)" stroke-opacity="0.35" stroke-width="0.6"/><path d="M392,11.7 h549" stroke="rgb(0,0,0)" stroke-opacity="0.37" stroke-width="1.2"/><path d="M910,15.2 h684" stroke="rgb(60,60,60)" stroke-opacity="0.40" stroke-width="0.8"/><path d="M1102,16.5 h567" stroke="rgb(70,70,70)" stroke-opacity="0.30" stroke-width="0.6"/><path d="M972,13.6 h222" stroke="rgb(60,60,60)" stroke-opacity="0.59" stroke-width="1"/><path d="M777,28.0 h343" stroke="rgb(0,0,0)" stroke-opacity="0.43" stroke-width="1.2"/><path d="M1002,10.1 h247" stroke="rgb(50,50,50)" stroke-opacity="0.26" stroke-width="1"/><path d="M973,8.4 h290" stroke="rgb(60,60,60)" stroke-opacity="0.45" stroke-width="1.2"/><path d="M540,13.3 h241" stroke="rgb(0,0,0)" stroke-opacity="0.48" stroke-width="0.8"/><path d="M124,11.2 h189" stroke="rgb(80,80,80)" stroke-opacity="0.58" stroke-width="1"/><path d="M587,11.2 h696" stroke="rgb(60,60,60)" stroke-opacity="0.34" stroke-width="0.6"/><path d="M26,26.8 h630" stroke="rgb(60,60,60)" stroke-opacity="0.40" stroke-width="1.2"/><path d="M1752,5.0 h236" stroke="rgb(50,50,50)" stroke-opacity="0.37" stroke-width="0.8"/><path d="M1320,23.0 h688" stroke="rgb(80,80,80)" stroke-opacity="0.64" stroke-width="1"/><path d="M92,29.0 h223" stroke="rgb(60,60,60)" stroke-opacity="0.57" stroke-width="1"/><path d="M50,24.6 h398" stroke="rgb(0,0,0)" stroke-opacity="0.68" stroke-width="1.2"/><path d="M350,28.5 h121" stroke="rgb(0,0,0)" stroke-opacity="0.69" stroke-width="0.8"/><path d="M1077,11.2 h356" stroke="rgb(80,80,80)" stroke-opacity="0.62" stroke-width="0.6"/><path d="M599,1.1 h367" stroke="rgb(0,0,0)" stroke-opacity="0.63" stroke-width="1.2"/><path d="M221,15.7 h459" stroke="rgb(0,0,0)" stroke-opacity="0.57" stroke-width="0.6"/><path d="M1821,17.1 h699" stroke="rgb(80,80,80)" stroke-opacity="0.59" stroke-width="0.6"/><path d="M360,7.1 h654" stroke="rgb(80,80,80)" stroke-opacity="0.35" stroke-width="0.8"/><path d="M1692,9.7 h864" stroke="rgb(70,70,70)" stroke-opacity="0.32" stroke-width="0.6"/><path d="M-52,24.7 h505" stroke="rgb(0,0,0)" stroke-opacity="0.60" stroke-width="1"/><path d="M1172,25.2 h832" stroke="rgb(70,70,70)" stroke-opacity="0.63" stroke-width="1"/><path d="M19,25.8 h432" stroke="rgb(80,80,80)" stroke-opacity="0.32" stroke-width="1"/><path d="M-153,15.9 h473" stroke="rgb(0,0,0)" stroke-opacity="0.49" stroke-width="0.6"/><path d="M1867,20.4 h785" stroke="rgb(0,0,0)" stroke-opacity="0.35" stroke-width="1.2"/><path d="M1658,25.8 h748" stroke="rgb(0,0,0)" stroke-opacity="0.61" stroke-width="0.6"/><path d="M888,2.9 h794" stroke="rgb(80,80,80)" stroke-opacity="0.37" stroke-width="0.6"/><path d="M-145,6.3 h544" stroke="rgb(0,0,0)" stroke-opacity="0.68" stroke-width="1"/><path d="M483,7.3 h223" stroke="rgb(0,0,0)" stroke-opacity="0.52" stroke-width="1"/><path d="M407,5.5 h550" stroke="rgb(0,0,0)" stroke-opacity="0.48" stroke-width="1"/><path d="M922,26.6 h349" stroke="rgb(50,50,50)" stroke-opacity="0.29" stroke-width="1"/><path d="M707,29.6 h765" stroke="rgb(70,70,70)" stroke-opacity="0.34" stroke-width="1"/><path d="M1043,29.9 h727" stroke="rgb(70,70,70)" stroke-opacity="0.46" stroke-width="1"/><path d="M707,1.2 h293" stroke="rgb(80,80,80)" stroke-opacity="0.50" stroke-width="1.2"/><path d="M464,0.9 h344" stroke="rgb(60,60,60)" stroke-opacity="0.50" stroke-width="1.2"/><path d="M685,17.3 h402" stroke="rgb(0,0,0)" stroke-opacity="0.60" stroke-width="0.8"/><path d="M1225,4.6 h550" stroke="rgb(50,50,50)" stroke-opacity="0.28" stroke-width="1.2"/><path d="M247,28.4 h633" stroke="rgb(0,0,0)" stroke-opacity="0.70" stroke-width="0.8"/><path d="M1243,26.3 h243" stroke="rgb(50,50,50)" stroke-opacity="0.34" stroke-width="1"/><path d="M1746,6.7 h375" stroke="rgb(50,50,50)" stroke-opacity="0.57" stroke-width="0.8"/><path d="M-183,26.9 h520" stroke="rgb(80,80,80)" stroke-opacity="0.51" stroke-width="1.2"/><path d="M412,26.0 h527" stroke="rgb(60,60,60)" stroke-opacity="0.64" stroke-width="0.6"/><path d="M1675,24.9 h394" stroke="rgb(50,50,50)" stroke-opacity="0.41" stroke-width="1"/><path d="M1374,25.5 h763" stroke="rgb(60,60,60)" stroke-opacity="0.25" stroke-width="1.2"/><path d="M554,24.4 h649" stroke="rgb(60,60,60)" stroke-opacity="0.61" stroke-width="1.2"/><path d="M160,24.6 h438" stroke="rgb(60,60,60)" stroke-opacity="0.69" stroke-width="0.8"/><path d="M1546,20.2 h110" stroke="rgb(0,0,0)" stroke-opacity="0.27" stroke-width="1.2"/><path d="M1079,19.9 h651" stroke="rgb(80,80,80)" stroke-opacity="0.70" stroke-width="1.2"/><path d="M-34,24.5 h708" stroke="rgb(50,50,50)" stroke-opacity="0.41" stroke-width="0.6"/><path d="M205,4.5 h519" stroke="rgb(60,60,60)" stroke-opacity="0.48" stroke-width="0.8"/><path d="M1793,13.0 h511" stroke="rgb(70,70,70)" stroke-opacity="0.60" stroke-width="1"/><path d="M1102,5.2 h475" stroke="rgb(0,0,0)" stroke-opacity="0.62" stroke-width="0.8"/><path d="M1007,7.7 h806" stroke="rgb(60,60,60)" stroke-opacity="0.62" stroke-width="1.2"/><path d="M1895,10.5 h312" stroke="rgb(80,80,80)" stroke-opacity="0.65" stroke-width="1.2"/><path d="M236,11.1 h461" stroke="rgb(80,80,80)" stroke-opacity="0.70" stroke-width="0.6"/><path d="M-189,26.0 h414" stroke="rgb(50,50,50)" stroke-opacity="0.56" stroke-width="0.6"/><path d="M203,19.4 h700" stroke="rgb(0,0,0)" stroke-opacity="0.55" stroke-width="0.8"/><path d="M889,11.5 h762" stroke="rgb(80,80,80)" stroke-opacity="0.48" stroke-width="0.8"/><path d="M297,12.4 h248" stroke="rgb(0,0,0)" stroke-opacity="0.48" stroke-width="0.6"/><path d="M498,1.1 h635" stroke="rgb(70,70,70)" stroke-opacity="0.62" stroke-width="1.2"/><path d="M1122,3.7 h247" stroke="rgb(50,50,50)" stroke-opacity="0.36" stroke-width="1"/><path d="M207,10.0 h696" stroke="rgb(0,0,0)" stroke-opacity="0.41" stroke-width="1.2"/><path d="M701,24.0 h505" stroke="rgb(80,80,80)" stroke-opacity="0.59" stroke-width="0.6"/><path d="M776,28.1 h355" stroke="rgb(0,0,0)" stroke-opacity="0.27" stroke-width="0.8"/><path d="M1665,20.0 h410" stroke="rgb(70,70,70)" stroke-opacity="0.52" stroke-width="1.2"/><path d="M1396,4.2 h791" stroke="rgb(50,50,50)" stroke-opacity="0.51" stroke-width="1.2"/><path d="M1784,19.4 h122" stroke="rgb(0,0,0)" stroke-opacity="0.29" stroke-width="0.8"/><path d="M-169,22.4 h397" stroke="rgb(70,70,70)" stroke-opacity="0.50" stroke-width="0.6"/><path d="M1379,21.5 h443" stroke="rgb(70,70,70)" stroke-opacity="0.54" stroke-width="0.6"/><path d="M1238,27.8 h667" stroke="rgb(0,0,0)" stroke-opacity="0.42" stroke-width="1.2"/><path d="M1584,18.3 h135" stroke="rgb(60,60,60)" stroke-opacity="0.55" stroke-width="1"/><path d="M331,9.2 h194" stroke="rgb(0,0,0)" stroke-opacity="0.37" stroke-width="0.8"/><path d="M783,28.5 h263" stroke="rgb(60,60,60)" stroke-opacity="0.41" stroke-width="1.2"/><path d="M652,24.6 h404" stroke="rgb(70,70,70)" stroke-opacity="0.48" stroke-width="0.8"/><path d="M868,28.7 h710" stroke="rgb(70,70,70)" stroke-opacity="0.51" stroke-width="1"/><path d="M1889,15.4 h317" stroke="rgb(0,0,0)" stroke-opacity="0.64" stroke-width="0.6"/><path d="M907,5.5 h853" stroke="rgb(70,70,70)" stroke-opacity="0.26" stroke-width="0.8"/><path d="M152,19.0 h811" stroke="rgb(0,0,0)" stroke-opacity="0.60" stroke-width="0.8"/><path d="M246,20.2 h169" stroke="rgb(80,80,80)" stroke-opacity="0.66" stroke-width="1"/><path d="M1074,12.1 h190" stroke="rgb(0,0,0)" stroke-opacity="0.38" stroke-width="1.2"/><path d="M1702,18.4 h893" stroke="rgb(50,50,50)" stroke-opacity="0.65" stroke-width="0.8"/><path d="M1301,17.2 h795" stroke="rgb(50,50,50)" stroke-opacity="0.56" stroke-width="1.2"/><path d="M1694,1.7 h354" stroke="rgb(70,70,70)" stroke-opacity="0.41" stroke-width="0.6"/><path d="M909,11.3 h723" stroke="rgb(50,50,50)" stroke-opacity="0.35" stroke-width="0.6"/><path d="M463,25.0 h541" stroke="rgb(0,0,0)" stroke-opacity="0.59" stroke-width="0.8"/><path d="M1073,24.7 h744" stroke="rgb(50,50,50)" stroke-opacity="0.67" stroke-width="0.8"/><path d="M843,31.7 h545" stroke="rgb(50,50,50)" stroke-opacity="0.56" stroke-width="1"/><path d="M972,0.1 h143" stroke="rgb(80,80,80)" stroke-opacity="0.52" stroke-width="0.6"/><path d="M-48,15.7 h426" stroke="rgb(0,0,0)" stroke-opacity="0.60" stroke-width="1"/><path d="M1412,5.4 h865" stroke="rgb(80,80,80)" stroke-opacity="0.62" stroke-width="1"/><path d="M1536,5.3 h553" stroke="rgb(60,60,60)" stroke-opacity="0.56" stroke-width="1.2"/><path d="M643,3.7 h538" stroke="rgb(50,50,50)" stroke-opacity="0.48" stroke-width="0.8"/><path d="M-22,31.8 h819" stroke="rgb(80,80,80)" stroke-opacity="0.37" stroke-width="0.8"/><path d="M822,15.5 h160" stroke="rgb(0,0,0)" stroke-opacity="0.41" stroke-width="1.2"/><path d="M1072,5.2 h240" stroke="rgb(0,0,0)" stroke-opacity="0.56" stroke-width="1.2"/><path d="M790,30.2 h106" stroke="rgb(80,80,80)" stroke-opacity="0.56" stroke-width="0.8"/><path d="M346,22.7 h824" stroke="rgb(0,0,0)" stroke-opacity="0.51" stroke-width="0.8"/><path d="M283,21.6 h661" stroke="rgb(70,70,70)" stroke-opacity="0.59" stroke-width="0.8"/><path d="M1688,9.6 h884" stroke="rgb(70,70,70)" stroke-opacity="0.62" stroke-width="0.6"/><path d="M1793,18.0 h311" stroke="rgb(0,0,0)" stroke-opacity="0.28" stroke-width="1"/><path d="M1065,19.2 h558" stroke="rgb(0,0,0)" stroke-opacity="0.32" stroke-width="1.2"/><path d="M985,29.6 h272" stroke="rgb(80,80,80)" stroke-opacity="0.28" stroke-width="0.6"/><path d="M1788,30.0 h185" stroke="rgb(50,50,50)" stroke-opacity="0.57" stroke-width="1"/><path d="M1578,6.6 h600" stroke="rgb(0,0,0)" stroke-opacity="0.60" stroke-width="1"/><path d="M172,0.4 h759" stroke="rgb(60,60,60)" stroke-opacity="0.53" stroke-width="1"/><path d="M-87,15.1 h125" stroke="rgb(70,70,70)" stroke-opacity="0.63" stroke-width="1"/><path d="M490,23.2 h204" stroke="rgb(50,50,50)" stroke-opacity="0.62" stroke-width="1"/></svg></div>
<!-- logo -->
<svg class="a" style="left:0;top:0" width="320" height="56">
  <g transform="skewX(-19)">
    <rect x="23" y="6.3" width="61.6" height="19.4" rx="1.5" fill="#f47216"/>
    <g fill="#0a0a0a">
     <rect x="25" y="8.3" width="6.6" height="15.4" rx="1"/>
     <rect x="33.2" y="8.3" width="14" height="15.4" rx="1.5"/>
     <rect x="48.8" y="8.3" width="14.6" height="15.4" rx="1.5"/>
     <rect x="65" y="8.3" width="17.6" height="15.4" rx="1.5"/>
    </g>
    <g fill="#f47216">
     <rect x="36.6" y="12" width="6.6" height="7.8"/>
     <rect x="52.2" y="12" width="8" height="2.2"/>
     <rect x="51.8" y="17.5" width="11.8" height="2.3"/>
     <rect x="64.8" y="12" width="12.4" height="2.2"/>
     <rect x="69" y="17.5" width="9" height="2.3"/>
    </g>
  </g>
  <text x="85" y="23" fill="#fff" font-family="Liberation Sans" font-weight="bold" font-style="italic" font-size="20" textLength="70" lengthAdjust="spacingAndGlyphs">StatiCa</text>
  <circle cx="160" cy="11" r="2.5" fill="none" stroke="#bbb" stroke-width="0.8"/>
  <text x="181" y="22" fill="#fff" font-family="Liberation Sans" font-weight="bold" font-style="italic" font-size="16.5" textLength="107" lengthAdjust="spacingAndGlyphs">CONNECTION</text>
  <text x="14" y="42" fill="#fff" font-family="Liberation Sans" font-weight="bold" font-style="italic" font-size="9.5" textLength="136" lengthAdjust="spacingAndGlyphs">Calculate yesterday's estimates</text>
</svg>
<!-- window controls -->
<div class="a" style="left:1841px;top:8px;width:17px;height:17px;background:#e6e6e6;border-radius:2px"><div class="a" style="left:5px;top:10px;width:8px;height:2px;background:#111"></div></div>
<div class="a" style="left:1868px;top:8px;width:17px;height:17px;background:#e6e6e6;border-radius:2px"><div class="a" style="left:4px;top:4px;width:9px;height:9px;border:2px solid #111"></div></div>
<div class="a" style="left:1895px;top:8px;width:17px;height:17px;background:#f17024;border-radius:2px">
 <svg class="a" style="left:0;top:0" width="17" height="17"><path d="M4.5,4.5 L12.5,12.5 M12.5,4.5 L4.5,12.5" stroke="#111" stroke-width="2"/></svg></div>
<div class="a" style="left:1630px;top:33px;width:200px;height:18px;background:#fff">
 <svg class="a" style="left:184px;top:1px" width="16" height="16"><circle cx="7" cy="7" r="4.5" fill="none" stroke="#aaa" stroke-width="1.6"/><path d="M10,10 L14,14" stroke="#aaa" stroke-width="2"/></svg></div>
<div class="a" style="left:1895px;top:33px;width:17px;height:17px;background:#e6e6e6;border-radius:2px">
 <div class="a" style="left:7px;top:4px;width:3px;height:2px;background:#111"></div><div class="a" style="left:7px;top:7px;width:3px;height:7px;background:#111"></div></div>

<!-- project items -->
<div class="a" style="left:6px;top:67px;width:204px;height:30px;background:#f17024;color:#fff;font-size:13px;line-height:30px;padding-left:7px">CON1
 <svg class="a" style="left:194px;top:12px" width="8" height="6"><path d="M0,0 L6,0 L3,3 Z" fill="#fff"/></svg></div>
<div class="a" style="left:12px;top:104px;font-size:12px;line-height:12px;color:#f17024">EPS</div>
<div class="a" style="left:45px;top:104px;font-size:12px;line-height:12px;color:#111">ST</div>
<div class="a" style="left:70px;top:104px;font-size:12px;line-height:12px;color:#111">CD</div>
<div class="a" style="left:99px;top:104px;font-size:12px;line-height:12px;color:#111">DR</div>
<div class="a" style="left:128px;top:104px;font-size:12px;line-height:12px;color:#111">FAT</div>
<div class="a" style="left:160px;top:104px;font-size:12px;line-height:12px;color:#111">FIR</div>
<div class="a" style="left:190px;top:104px;font-size:12px;line-height:12px;color:#111">HT</div>
<div class="a" style="left:294px;top:63px;width:5px;height:91px;background:#c8c8c8"></div>
<!-- undo redo save -->
<div class="a" style="left:328px;top:74px;font-size:12px;line-height:12px;color:#333">Undo</div>
<div class="a" style="left:328px;top:96px;font-size:12px;line-height:12px;color:#aaa">Redo</div>
<div class="a" style="left:328px;top:118px;font-size:12px;line-height:12px;color:#333">Save</div>
<svg class="a" style="left:300px;top:64px" width="30" height="72">
 <path d="M9,19.5 L13,14 L13.5,16.5 C17,15 21.5,15.5 23,20 L21.5,20.5 C19.5,17.8 16.5,17.8 14.5,19 L16,21 Z" fill="#222"/>
 <path d="M23,41.5 L19,36 L18.5,38.5 C15,37 10.5,37.5 9,42 L10.5,42.5 C12.5,39.8 15.5,39.8 17.5,41 L16,43 Z" fill="#bbb"/>
 <path d="M9.5,52.5 L22,52.5 L23.5,54 L23.5,67.5 L9.5,67.5 Z" fill="none" stroke="#555" stroke-width="1.3" stroke-linejoin="round"/>
 <rect x="12" y="52.5" width="9" height="6.5" fill="none" stroke="#555" stroke-width="1.2"/>
 <rect x="12.5" y="62" width="7.5" height="5.5" fill="none" stroke="#555" stroke-width="1.1"/>
 <rect x="13.5" y="64" width="2" height="3" fill="#555"/>
</svg>
<!-- highlight boxes -->
<div class="a hl" style="left:372px;top:67px;width:56px;height:70px"></div>
<div class="a hl" style="left:955px;top:67px;width:67px;height:70px"></div>

<div class="a rb" style="left:188px;top:104px;width:90px">New</div>
<div class="a rb" style="left:226px;top:104px;width:90px">Copy</div>
<div class="a rb" style="left:355px;top:104px;width:90px">Members</div>
<div class="a rb" style="left:402px;top:104px;width:90px">Plates</div>
<div class="a rb" style="left:440px;top:104px;width:90px">LCS</div>
<div class="a rb" style="left:489px;top:104px;width:90px">New</div>
<div class="a rb" style="left:529px;top:104px;width:90px">Gallery</div>
<div class="a rb" style="left:585px;top:104px;width:90px">Propose</div>
<div class="a rb" style="left:632px;top:104px;width:90px">Publish</div>
<div class="a rb" style="left:679px;top:104px;width:90px">Manage</div>
<div class="a rb" style="left:734px;top:104px;width:90px">Code<br>setup</div>
<div class="a rb" style="left:780px;top:104px;width:90px">Calculate</div>
<div class="a rb dis" style="left:829px;top:104px;width:90px">Overall<br>check</div>
<div class="a rb" style="left:885px;top:104px;width:90px">Settings</div>
<div class="a rb" style="left:943px;top:104px;width:90px">Loads in<br>equilibrium</div>
<div class="a rb" style="left:1009px;top:104px;width:90px">Loads -<br>percentage</div>
<div class="a rb" style="left:1074px;top:104px;width:90px">XLS<br>Import</div>
<div class="a rb" style="left:1129px;top:104px;width:90px">Connection<br>Import</div>
<div class="a rb" style="left:1183px;top:104px;width:90px">XLS<br>Export</div>
<div class="a rb" style="left:1239px;top:104px;width:90px">Member</div>
<div class="a rb" style="left:1284px;top:104px;width:90px">Load</div>
<div class="a rb" style="left:1332px;top:104px;width:90px">Operation</div>
<div class="a grp" style="left:68px;width:160px;color:#f5a77a">Project items</div>
<div class="a grp" style="left:253px;width:160px">Data</div>
<div class="a grp" style="left:358px;width:160px">Labels</div>
<div class="a grp" style="left:475px;width:160px">Pictures</div>
<div class="a grp" style="left:597px;width:160px">Connection Browser</div>
<div class="a grp" style="left:747px;width:160px">CBFEM</div>
<div class="a grp" style="left:917px;width:160px">Options</div>
<div class="a grp" style="left:1092px;width:160px">Import/Export loads</div>
<div class="a grp" style="left:1253px;width:160px">New</div>
<div class="a sep" style="left:365px"></div>
<div class="a sep" style="left:508px"></div>
<div class="a sep" style="left:599px"></div>
<div class="a sep" style="left:753px"></div>
<div class="a sep" style="left:900px"></div>
<div class="a sep" style="left:1091px"></div>
<div class="a sep" style="left:1252px"></div>
<div class="a sep" style="left:1411px"></div>
<svg class="a" style="left:0;top:0" width="1420" height="157">
 <!-- New (project) -->
 <path d="M231,73.5 L242,73.5 Q243.5,73.5 243.5,75 L243.5,98 Q243.5,99.5 242,99.5 L224.5,99.5 Q223,99.5 223,98 L223,82 Z" fill="none" stroke="#5a5a5a" stroke-width="2.3" stroke-linejoin="round"/>
 <path d="M231,73.5 L231,80.5 Q231,82 229.5,82 L223,82 Z" fill="#5a5a5a"/>
 <rect x="226" y="90.7" width="14.8" height="3.1" fill="#5a5a5a"/>
 <path d="M227.7,86.5 L233.3,91 L239,86.5" fill="none" stroke="#5a5a5a" stroke-width="2"/>
 <path d="M222.2,70.3 L227,70.3 L227,75.1 L231.7,75.1 L231.7,79.9 L227,79.9 L227,84.6 L222.2,84.6 L222.2,79.9 L217.3,79.9 L217.3,75.1 L222.2,75.1 Z" fill="#5b9de6"/>
 <!-- Copy -->
 <path d="M268,73.3 L276,73.3 Q277,73.3 277,74.5 L277,81 M267,94 L262.5,94 Q261.4,94 261.4,92.8 L261.4,80.3 L268,73.3" fill="none" stroke="#5a5a5a" stroke-width="2.1" stroke-linejoin="round"/>
 <path d="M268,73.3 L268,79 Q268,80.3 266.7,80.3 L261.4,80.3 Z" fill="#5a5a5a"/>
 <path d="M273.3,82 L279.5,82 Q280.7,82 280.7,83.2 L280.7,97.7 Q280.7,98.8 279.5,98.8 L269.2,98.8 Q268,98.8 268,97.7 L268,87.3 Z" fill="#fff" stroke="#5a5a5a" stroke-width="2.1" stroke-linejoin="round"/>
 <path d="M273.3,82 L273.3,86 Q273.3,87.3 272,87.3 L268,87.3 Z" fill="#5a5a5a"/>
 <rect x="269.2" y="94.4" width="10.6" height="2.2" fill="#5a5a5a"/>
 <path d="M270.5,90.2 L274.5,93.8 L278.5,90.2" fill="none" stroke="#5a5a5a" stroke-width="1.6"/>
 <!-- Members -->
 <path d="M388.5,77.3 L412,77.3 M388.5,80.3 L412,80.3 M388.5,91.2 L412,91.2 M388.5,94.2 L412,94.2" stroke="#333" stroke-width="2.2"/>
 <path d="M389,76 L389,84.5 L385,86 L390.5,86.8 L389,88.5 L389,96 M412,76 L412,84.5 L408,86 L413.5,86.8 L412,88.5 L412,96" fill="none" stroke="#333" stroke-width="1.2"/>
 <!-- Plates -->
 <rect x="439" y="73" width="17" height="25" rx="1" fill="none" stroke="#333" stroke-width="1.6"/>
 <circle cx="442.5" cy="78" r="1.3" fill="none" stroke="#333" stroke-width="0.9"/><circle cx="452.5" cy="78" r="1.3" fill="none" stroke="#333" stroke-width="0.9"/>
 <circle cx="442.5" cy="93" r="1.3" fill="none" stroke="#333" stroke-width="0.9"/><circle cx="452.5" cy="93" r="1.3" fill="none" stroke="#333" stroke-width="0.9"/>
 <!-- LCS -->
 <path d="M481.5,74 L481.5,89 L498,89 M481.5,89 L471,99" fill="none" stroke="#555" stroke-width="1.5"/>
 <path d="M478,75 L481.5,70 L485,75 Z M497,86 L501,89 L497,92 Z M469,95 L469,101 L475,101 Z" fill="#555"/>
 <!-- New picture -->
 <rect x="521.5" y="70.5" width="27" height="25" fill="#eee" stroke="#aab" stroke-width="1"/>
 <rect x="518.5" y="75.5" width="26" height="26" fill="#eee" stroke="#aab" stroke-width="1"/>
 <path d="M520.5,95.5 L527.5,85.5 L529.5,88.5 L537,81.5 L542.5,95.5 Z" fill="none" stroke="#f17024" stroke-width="1.1"/>
 <path d="M523.1,70.2 L528.3,70.2 L528.3,75.2 L533.8,75.2 L533.8,80.4 L528.3,80.4 L528.3,85.5 L523.1,85.5 L523.1,80.4 L518.3,80.4 L518.3,75.2 L523.1,75.2 Z" fill="url(#gPlus)"/>
 <!-- Gallery -->
 <rect x="561.5" y="70.5" width="27" height="25" fill="#eee" stroke="#aab" stroke-width="1"/>
 <rect x="558.5" y="75.5" width="26" height="26" fill="#eee" stroke="#aab" stroke-width="1"/>
 <path d="M560.5,95.5 L567.5,85.5 L569.5,88.5 L577,81.5 L582.5,95.5 Z" fill="none" stroke="#f17024" stroke-width="1.1"/>
 <circle cx="564" cy="81" r="1.8" fill="none" stroke="#f17024" stroke-width="1"/>
 <!-- Propose -->
 <path d="M617,70.6 L617,92.5 M622.8,70.6 L622.8,92.5" stroke="#5e5e5e" stroke-width="2.9"/>
 <path d="M625,79.5 L635.8,79.5 M625,84 L630,84" stroke="#5e5e5e" stroke-width="1.8"/>
 <circle cx="635.5" cy="88.5" r="5.3" fill="none" stroke="#5e5e5e" stroke-width="2.4"/>
 <path d="M639,92.3 L644.5,99.5" stroke="#5e5e5e" stroke-width="3.4"/>
 <!-- Publish -->
 <path d="M665.6,70.6 L665.6,101.6 M673.6,70.6 L673.6,101.6" stroke="#5e5e5e" stroke-width="2.9"/>
 <path d="M677.9,75.3 L677.9,97.6" stroke="#666" stroke-width="2"/>
 <path d="M671.3,77.7 L680.8,77.7 M671.3,94.5 L680.8,94.5" stroke="#1a1a1a" stroke-width="1.8"/>
 <path d="M668,82.8 L671.5,82.8 M668,89.5 L671.5,89.5" stroke="#5e5e5e" stroke-width="1.6"/>
 <path d="M681.2,82.8 L692.8,82.8 M681.2,89.5 L692.8,89.5" stroke="#5e5e5e" stroke-width="2"/>
 <path d="M680.5,79.5 L683.5,82 L680.5,82 Z M680.5,90.5 L683.5,90.5 L680.5,93 Z" fill="#777"/>
 <!-- Manage -->
 <path d="M710.5,70.6 L710.5,92.5 M716.3,70.6 L716.3,92.5" stroke="#5e5e5e" stroke-width="2.9"/>
 <path d="M719,79.5 L730,79.5 M719,84 L730,84" stroke="#5e5e5e" stroke-width="1.8"/>
 <path d="M731.5,85.5 L737.5,91.5 L728,98.2 L724.5,94.7 Z" fill="#5e5e5e" transform="translate(0,0)"/>
 <path d="M734,82.2 Q737,79.5 739.5,82 Q742,84.5 739.5,87.5 L738.5,88.5 L732.5,82.8 Z" fill="#5e5e5e"/>
 <path d="M724,96 L727,99 L722.3,100.6 Z" fill="#5e5e5e"/>
 <!-- Code setup (wrench) -->
 <path d="M765,76 A7.2,7.2 0 1 1 765,81.8 L771,81.8 L771,76 Z" fill="none" stroke="#5e5e5e" stroke-width="1.7" stroke-linejoin="round"/>
 <path d="M775,86 L789.5,100.5 L793.3,96.7 L778.8,82.2" fill="none" stroke="#5e5e5e" stroke-width="1.7" stroke-linejoin="round"/>
 <!-- Calculate (abacus) -->
 <path d="M812,71 L812,100 M837,71 L837,100 M812,76 L837,76 M812,84.5 L837,84.5 M812,93 L837,93 M809,100 L815,100 M834,100 L840,100" stroke="#222" stroke-width="1.8"/>
 <g fill="#111"><path d="M819.5,73.5 L821,76 L819.5,78.5 L818,76 Z"/><path d="M830,73.5 L831.5,76 L830,78.5 L828.5,76 Z"/><path d="M824.5,82 L826,84.5 L824.5,87 L823,84.5 Z"/><path d="M826,90.5 L827.5,93 L826,95.5 L824.5,93 Z"/></g>
 <g fill="#f17024"><ellipse cx="825" cy="76" rx="1.5" ry="2"/><ellipse cx="830" cy="84.5" rx="1.5" ry="2"/><ellipse cx="821" cy="93" rx="1.5" ry="2"/><ellipse cx="832" cy="93" rx="1.5" ry="2"/></g>
 <!-- Overall check -->
 <path d="M859,76.5 L865,71 L867.5,72 L867.5,98 L859,99 Z" fill="#e08a8a"/>
 <path d="M861.5,75 L865.5,72.5 L865.5,98.5 L861.5,99 Z" fill="#b09898"/>
 <path d="M868.5,78 L873.5,74 L873.5,96.5 L868.5,101.5 Z" fill="#b8a090"/>
 <path d="M868.8,78 L868.8,101.5 M868.8,78 L873.5,74" stroke="#f5b870" stroke-width="0.9" fill="none"/>
 <path d="M869.5,79 L874.5,74.5 L888,78.5 L883,82.8 Z" fill="#cacad2"/>
 <path d="M869.5,82.5 L884.5,83.5 L884.5,91 L869.5,89.5 Z" fill="#b4dc9a"/>
 <path d="M869.5,88 L875,86 L888,87.5 L883,91.5 L877,91.5 Z" fill="#bce8a4"/>
 <!-- Settings gear -->
 <g transform="translate(931,85.5)">
  <path d="M-3,-13 L3,-13 L3.8,-9.5 L7,-8 L10,-10 L13,-6 L10.5,-3.5 L11,0 L10.5,3.5 L13,6 L10,10 L7,8 L3.8,9.5 L3,13 L-3,13 L-3.8,9.5 L-7,8 L-10,10 L-13,6 L-10.5,3.5 L-11,0 L-10.5,-3.5 L-13,-6 L-10,-10 L-7,-8 L-3.8,-9.5 Z" fill="#555"/>
  <circle r="6" fill="#fff"/><circle r="4" fill="#555"/><circle r="2.5" fill="#fff"/>
 </g>
 <!-- Loads in equilibrium (scales) -->
 <path d="M988,72 L988,98 M983,98 L993,98 M978,77 L998,77" stroke="#666" stroke-width="2"/>
 <path d="M979,77 L973,90 L985,90 Z M997,77 L991,90 L1003,90 Z" fill="none" stroke="#666" stroke-width="1"/>
 <path d="M973,90 Q979,95 985,90 Z M991,90 Q997,95 1003,90 Z" fill="#666"/>
 <!-- Loads percentage -->
 <text x="1041" y="89" font-family="Liberation Sans" font-weight="bold" font-size="16" fill="#666">%</text>
 <path d="M1063,73 L1063,92" stroke="#666" stroke-width="3.5"/>
 <path d="M1057,91 L1069,91 L1063,99 Z" fill="#666"/>
 <!-- XLS import -->
 <rect x="1122.5" y="75.5" width="11.0" height="20.5" fill="#fff" stroke="#5a5a5a" stroke-width="1.6"/><path d="M1122.5,78.6 L1133.5,78.6 M1122.5,82.75 L1133.5,82.75 M1122.5,86.9 L1133.5,86.9 M1122.5,91.5 L1133.5,91.5 M1127,75.5 L1127,96" stroke="#5a5a5a" stroke-width="1.4"/>
 <path d="M1104.2,74 L1120.8,71.9 L1120.8,99.8 L1104.2,97.3 Z" fill="#5a5a5a"/>
 <text x="1109" y="91" font-family="Liberation Sans" font-weight="bold" font-size="14" fill="#fff" textLength="7.5" lengthAdjust="spacingAndGlyphs">X</text>
 <!-- Connection import -->
 <rect x="1160" y="87.3" width="28" height="6.3" fill="#5a5a5a"/>
 <path d="M1162.5,79.5 L1174,89.5 L1185.5,79.5" fill="none" stroke="#5a5a5a" stroke-width="3.8"/>
 <!-- XLS export -->
 <rect x="1231" y="75.5" width="11.5" height="20.5" fill="#fff" stroke="#5a5a5a" stroke-width="1.6"/><path d="M1231,78.6 L1242.5,78.6 M1231,82.75 L1242.5,82.75 M1231,86.9 L1242.5,86.9 M1231,91.5 L1242.5,91.5 M1236,75.5 L1236,96" stroke="#5a5a5a" stroke-width="1.4"/>
 <path d="M1212.5,74 L1230.4,71.5 L1230.4,100.25 L1212.5,97.75 Z" fill="#fff" stroke="#6a6a6a" stroke-width="1.2"/>
 <text x="1218" y="91" font-family="Liberation Sans" font-weight="bold" font-size="14" fill="#5a5a5a" textLength="7.5" lengthAdjust="spacingAndGlyphs">X</text>
 <defs><linearGradient id="gPlus" x1="0" y1="0" x2="0" y2="1"><stop offset="0" stop-color="#a8c8ee"/><stop offset="1" stop-color="#4f86cc"/></linearGradient></defs>
 <!-- Member -->
 <path d="M1273.6,70 L1278.4,70 L1278.4,75.6 L1284,75.6 L1284,80.4 L1278.4,80.4 L1278.4,86 L1273.6,86 L1273.6,80.4 L1268,80.4 L1268,75.6 L1273.6,75.6 Z" fill="url(#gPlus)"/>
 <path d="M1269.5,95.8 L1274.2,95.8 L1274.2,100.5 L1269.5,100.5 Z M1269.5,95.8 L1294.5,84 L1298.7,85.2 L1274.2,95.8 M1274.2,100.5 L1298.7,89.3 L1298.7,85.2 M1272,94.8 L1296,84.5" fill="none" stroke="#111" stroke-width="0.9" stroke-linejoin="round"/>
 <!-- Load -->
 <path d="M1318.6,70 L1323.4,70 L1323.4,75.6 L1329,75.6 L1329,80.4 L1323.4,80.4 L1323.4,86 L1318.6,86 L1318.6,80.4 L1313,80.4 L1313,75.6 L1318.6,75.6 Z" fill="url(#gPlus)"/>
 <path d="M1322.4,84 L1322.4,96 M1330.4,83.3 L1330.4,96 M1338.5,83.3 L1338.5,96" stroke="#111" stroke-width="1.2"/>
 <path d="M1319.5,93 L1322.4,96.5 L1325.3,93 M1327.5,93 L1330.4,96.5 L1333.3,93 M1335.6,93 L1338.5,96.5 L1341.4,93" fill="none" stroke="#111" stroke-width="1.2"/>
 <!-- Operation -->
 <path d="M1366.6,70 L1371.4,70 L1371.4,75.6 L1377,75.6 L1377,80.4 L1371.4,80.4 L1371.4,86 L1366.6,86 L1366.6,80.4 L1361,80.4 L1361,75.6 L1366.6,75.6 Z" fill="url(#gPlus)"/>
 <path d="M1369.5,93 L1392.8,71.3 M1379.7,98.3 L1392.8,86" stroke="#aaa" stroke-width="2.4"/>
 <path d="M1369.5,93 L1392.8,71.3 M1379.7,98.3 L1392.8,86" stroke="#fff" stroke-width="0.8"/>
 <path d="M1369.5,92.5 L1369.5,98.3 L1379.7,98.3" fill="none" stroke="#111" stroke-width="1.3"/>
</svg>

<svg class="a" style="left:0;top:0" width="1376" height="1120" viewBox="0 0 1376 1120">
 <defs>
  <linearGradient id="gArr" x1="0" y1="0" x2="1" y2="0"><stop offset="0" stop-color="#eee"/><stop offset="0.5" stop-color="#999"/><stop offset="1" stop-color="#555"/></linearGradient>
  <linearGradient id="gArc" x1="0" y1="0" x2="0" y2="1"><stop offset="0" stop-color="#e0e0e0"/><stop offset="0.55" stop-color="#5a5a5a"/><stop offset="1" stop-color="#9a9a9a"/></linearGradient>
  <linearGradient id="gArc2" x1="0" y1="0" x2="1" y2="1"><stop offset="0" stop-color="#e8e8e8"/><stop offset="0.75" stop-color="#5a5a5a"/><stop offset="1" stop-color="#666"/></linearGradient>
 </defs>
 <!-- axis dash lines -->
 <path d="M160,457 L292,494" stroke="#7fa8e0" stroke-width="1" stroke-dasharray="10,4,2,4" fill="none"/>
 <path d="M1049,713 L1182,751" stroke="#7fa8e0" stroke-width="1" stroke-dasharray="10,4,2,4" fill="none"/>

 <!-- ===== B2 beam (left) ===== -->
 <g stroke-linejoin="round">
  <path d="M271,438 L316,400 L566,472 L566,521.5 Z" fill="#7a9bc6"/>
  <path d="M271,438 L566,521.5 L566,527.5 L271,444 Z" fill="#7090b8"/>
  <path d="M292,450 L566,527.5 L566,644 L292,566 Z" fill="#6c8ab0"/>
  <path d="M271,583 L292,566 L566,644 L566,666.5 Z" fill="#7a9bc6"/>
  <path d="M271,583 L566,666.5 L566,672.5 L271,589 Z" fill="#7090b8"/>
  <path d="M316,400 L566,472 M271,438 L566,521.5 M271,444 L566,527.5 M292,450 L292,566 M271,583 L566,666.5 M271,589 L566,672.5 M271,438 L271,444 L292,450 M271,583 L271,589" stroke="#9cc0ec" stroke-width="1" fill="none"/>
 </g>

 <!-- ===== Column C ===== -->
 <!-- left flange -->
 <path d="M565,261 L646,192 L653,194 L573,263 Z" fill="#d0601c"/>
 <path d="M565,261 L573,263 L573,980 L565,980 Z" fill="#b6541a"/>
 <path d="M565,261 L646,192 L653,194 L653,239 M565,980 L573,980" stroke="#ee7a30" stroke-width="1" fill="none"/>
 <path d="M565.5,261 L565.5,980 M572.5,263 L572.5,980" stroke="#f07a30" stroke-width="1"/>
 <path d="M573,263 L653,195 L653,239 L611,228 L611,947 L573,980 Z" fill="#55260c"/>
 <path d="M573,263.5 L653,195.5" stroke="#e06a28" stroke-width="1.2"/>
 <!-- web -->
 <path d="M611,228 L730,262 L689,297 L689,969 L611,947 Z" fill="#b04f1b"/>
 <path d="M609,227 L730,261 M611,947 L689,969 M573,980 L611,947" stroke="#ee7a30" stroke-width="1.2" fill="none"/>
 <!-- bottom red plate -->
 <path d="M600,982 L632.5,954 L689,969 L689,1009 Z" fill="#d20000"/>
 <path d="M600,982 L689,1009 L689,1015.5 L600,990 Z" fill="#b80000"/>
 <path d="M600,982 L632.5,954 M600,982 L689,1009 M600,990 L689,1015.5 M600,982 L600,990" stroke="#ff2020" stroke-width="0.8" fill="none"/>
 <!-- stiffeners -->
 <g id="stiff">
  <path d="M573,547 L606,518 L621,516 L689,537 L689,579 Z" fill="#2b3d72"/>
  <path d="M573,547 L689,579 L689,583 L573,553 Z" fill="#24366a"/>
  <path d="M573,548 L689,580" stroke="#4a64a8" stroke-width="0.8"/>
  <path d="M572,542 L603,515 L607,519 L575,547 Z" fill="#8a7400" stroke="#ffe000" stroke-width="1"/>
  <path d="M621,512 L689,532 L689,538 L621,518 Z" fill="#ffee00"/>
 </g>
 <use href="#stiff" transform="translate(0,146)"/>
 <!-- bolt on web -->
 <g transform="translate(-131,57)">
  <path d="M728,584 L734,578 L744,580 L747,588 L745,597 L735,600 L728,596 Z" fill="#e8c000" stroke="#ffe040" stroke-width="0.8"/>
  <path d="M728,584 L734,578 L740,580 L736,586 Z" fill="#ffd820"/>
  <path d="M740,581 L746,583 L747,591 L744,599 L737,599 L735,590 Z" fill="#5c4c00" stroke="#ffe040" stroke-width="0.8"/>
 </g>
 <!-- right flange -->
 <path d="M689,297 L770,228 L776,230 L697,299 Z" fill="#d4b000"/>
 <path d="M689,297 L697,299 L697,1015 L689,1015 Z" fill="#b89a00"/>
 <path d="M697,299 L776,230 L776,947 L697,1015 Z" fill="#5c4c00"/>
 <path d="M689,297 L770,228 L776,230 L776,947 L697,1015 L689,1015 M697,299 L776,230" stroke="#ffd800" stroke-width="1.1" fill="none"/>
 <path d="M689.5,297 L689.5,1015 M696.5,299 L696.5,1015 M775.5,230 L775.5,947" stroke="#ffe000" stroke-width="1"/>
 <!-- column axis -->
 <path d="M670,1017 L670,1035" stroke="#7fa8e0" stroke-width="1" stroke-dasharray="3,3"/>

 <!-- ===== B1 beam (right) ===== -->
 <path d="M723,570 L767,530 L1070,618 L1026.5,655.3 Z" fill="#7a9bc6"/>
 <path d="M723,570 L1026.5,655.3 L1026.5,662.3 L723,575.5 Z" fill="#7090b8"/>
 <path d="M1026.5,655.3 L1070,618 L1070,624 L1026.5,662.3 Z" fill="#2f3b4c"/>
 <path d="M745,582 L1026.5,662.3 L1048,643 L1048,785 L745,700 Z" fill="#6c8ab0"/>
 <path d="M1048,785 L1070,764 L1048,758 Z" fill="#7a9bc6"/>
 <path d="M723,715 L748,697 L1048,785 L1026.5,800.5 Z" fill="#7a9bc6"/>
 <path d="M723,715 L1026.5,800.5 L1026.5,807.5 L723,722 Z" fill="#7090b8"/>
 <path d="M1026.5,800.5 L1070,764 L1070,770 L1026.5,807.5 Z" fill="#2f3b4c"/>
 <path d="M767,530 L1070,618 M723,570 L1026.5,655.3 M723,575.5 L1026.5,662.3 M1046.8,641 L1046.8,785 M1048.8,641 L1048.8,785 M723,715 L1026.5,800.5 M723,722 L1026.5,807.5 M1026.5,655.3 L1070,618" stroke="#9cc0ec" stroke-width="1" fill="none"/>
 <!-- endplate -->
 <path d="M714,559 L760,520 L769,522 L723,561 Z" fill="#2d4a8a"/>
 <path d="M714,559 L723,561 L723,726 L714,726 Z" fill="#2b4583"/>
 <path d="M723,561 L769,522 L769,540 L723,577 Z" fill="#7a9bc6"/>
 <path d="M723,577 L745,583 L745,700 L723,715 Z" fill="#131a33"/>
 <path d="M714,559 L723,561 L723,726 M723,561 L769,522" stroke="#4a6ab0" stroke-width="0.8" fill="none"/>
 <path d="M723,568 L769,574" stroke="#9cc0ec" stroke-width="0.8"/>
 <!-- welds on endplate -->
 <path d="M722.5,563 L752,538 L756,543 L724,569 Z" fill="#8a7400" stroke="#ffe000" stroke-width="1"/>
 <path d="M722.5,709 L746,692 L748,698 L724,716 Z" fill="#8a7400" stroke="#ffe000" stroke-width="1"/>
 <path d="M741,581 L747.5,583 L747.5,697 L741,699 Z" fill="#8a7400" stroke="#ffe000" stroke-width="1"/>
 <!-- bolts on endplate -->
 <g id="bolt">
  <path d="M728,584 L734,578 L744,580 L747,588 L745,597 L735,600 L728,596 Z" fill="#e8c000" stroke="#ffe040" stroke-width="0.8"/>
  <path d="M728,584 L734,578 L740,580 L736,586 Z" fill="#ffd820"/>
  <path d="M740,581 L746,583 L747,591 L744,599 L737,599 L735,590 Z" fill="#5c4c00" stroke="#ffe040" stroke-width="0.8"/>
 </g>
 <use href="#bolt" transform="translate(0,95)"/>
 <!-- ===== dimension lines ===== -->
 <g stroke="#000" stroke-width="1" fill="none">
  <path d="M718.5,485 L718.5,549 M728.5,498 L728.5,542"/>
  <path d="M711,513 L740,473"/>
  <path d="M670.5,603 L670.5,761 M678.5,600 L678.5,775 M686.5,581 L686.5,761"/>
  <path d="M667,606 L708,574 M667,612 L712,578 M684,626 L712,602 M684,722 L712,698 M685,734 L712,713 M685,739 L712,720 M667,763 L712,729 M667,771 L712,737"/>
  <path d="M667,606 L671,603 M683,592 L688,588 M667,763 L672,760"/>
 </g>
 <g fill="#000"><path d="M710,514 L713,504 L719,508 Z"/><path d="M728,482 L719,487 L724,492 Z"/>
  <path d="M669,605 L672,605 L671,614 Z M677,601 L680,601 L679,610 Z M685,589 L688,589 L687,598 Z M669,752 L672,752 L671,760 Z M677,767 L680,767 L679,775 Z M685,752 L688,752 L687,760 Z M685,690 L688,690 L687,700 Z M677,770 L680,770 L679,780 Z"/></g>

 <!-- dimension labels -->
 <g font-family="Liberation Sans" font-size="11" fill="#000">
  <rect x="740" y="458" width="8" height="14" fill="#c8c4b0" opacity="0.85"/><text x="741" y="469">1</text>
  <rect x="740" y="472" width="8" height="14" fill="#c8c4b0" opacity="0.85"/><text x="741" y="483">6</text>
  <rect x="723" y="487" width="25" height="15" fill="#c8c4b0" opacity="0.85"/><text x="724" y="499">25.0</text>
  <rect x="678" y="584" width="26" height="14" fill="#d8d0c0" opacity="0.8"/><text x="680" y="595">10.0</text>
  <rect x="686" y="594" width="26" height="14" fill="#d8d0c0" opacity="0.8"/><text x="688" y="605">40.0</text>
  <rect x="686" y="656" width="30" height="14" fill="#d8d0c0" opacity="0.75"/><text x="688" y="667">140.0</text>
  <rect x="679" y="663" width="28" height="14" fill="#d8d0c0" opacity="0.75"/><text x="680" y="674">220.0</text>
  <rect x="670" y="670" width="31" height="14" fill="#d8d0c0" opacity="0.8"/><text x="671" y="681">240.0</text>
  <rect x="685" y="718" width="26" height="14" fill="#d8d0c0" opacity="0.8"/><text x="687" y="729">40.0</text>
  <rect x="678" y="742" width="26" height="14" fill="#d8d0c0" opacity="0.8"/><text x="680" y="753">10.0</text>
 </g>

 <!-- member labels -->
 <g font-family="Liberation Sans" font-size="12" fill="#000">
  <rect x="441" y="545" width="21" height="18" fill="#fff"/><text x="443" y="559">B2</text>
  <rect x="855" y="665" width="21" height="18" fill="#fff"/><text x="857" y="679">B1</text>
  <rect x="629" y="776" width="15" height="17" fill="#fff"/><text x="632" y="789">C</text>
 </g>

 <!-- moment symbols -->
 <g>
  <path d="M263.7,457.5 C252,458 240,470 238.2,488.5 C238,496 244,503 250,506.7 L255.5,503 C249,496 245,488 245.5,481 C247,471 254,465.5 263.7,464.7 Z" fill="url(#gArc)"/>
  <path d="M245.5,511.2 L263.7,501.2 L262.8,514 Z" fill="#c4c4c4"/>
  <path d="M266.5,457 L273.2,450 L273.2,505 L274.7,505 L269.2,523 L261.9,504.5 L266.5,504.5 Z" fill="#505050"/>
  <rect x="269" y="424" width="30" height="15" fill="#b4b4b4"/><text x="270" y="435.5" font-family="Liberation Sans" font-size="11">-15.0</text>
  <rect x="252" y="490" width="26" height="14.5" fill="#b8b8b8" opacity="0.85"/><text x="253" y="501.5" font-family="Liberation Sans" font-size="11">30.0</text>
 </g>
 <g>
  <path d="M1070.7,697 C1080,692 1090,697 1096,705 C1101,712 1104,720 1104.1,729.9 L1099.4,729.9 C1099,721 1095,712 1089,707 C1085,703 1081,700 1077.4,699.3 Z" fill="url(#gArc2)"/>
  <path d="M1075.5,747 L1089.8,741.3 L1082.2,752.8 Z" fill="#c8c8c8"/>
  <path d="M1068.8,688 L1076.4,681 L1076.4,734 L1080,734 L1072.6,754.7 L1065.5,736.5 L1068.8,736.5 Z" fill="#505050"/>
  <rect x="1072" y="656" width="30" height="15" fill="#b4b4b4"/><text x="1073" y="667.5" font-family="Liberation Sans" font-size="11">-15.0</text>
  <rect x="1089" y="731" width="26" height="15" fill="#b8b8b8" opacity="0.9"/><text x="1090" y="742.5" font-family="Liberation Sans" font-size="11">30.0</text>
 </g>
 <!-- force arrow bottom -->
 <path d="M670,1025 L678,1046 L673,1046 L673,1094 L667,1094 L667,1046 L662,1046 Z" fill="url(#gArr)"/>
 <rect x="671" y="1093" width="26" height="15" fill="#c4c4c4"/><text x="672" y="1105" font-family="Liberation Sans" font-size="11">30.0</text>

</svg>

<!-- viewport toolbar icons -->
<svg class="a" style="left:0;top:157px" width="270" height="26">
 <path d="M19,13 L28,5 L37,13 M21,11 L21,23 L26,23 L26,16 L31,16 L31,23 L36,23 L36,11" fill="none" stroke="#fff" stroke-width="2"/>
 <rect x="55.5" y="4.5" width="13" height="11" fill="none" stroke="#fff" stroke-width="1.4"/>
 <circle cx="67" cy="16" r="5" fill="#999" stroke="#fff" stroke-width="1.4"/>
 <path d="M70.5,19.5 L74,23 M67,13 L67,16 L65,17" stroke="#fff" stroke-width="1.3" fill="none"/>
 <circle cx="99" cy="13" r="6.5" fill="none" stroke="#fff" stroke-width="2.2"/>
 <path d="M103.5,17.5 L109,23" stroke="#fff" stroke-width="2.6"/>
 <path d="M137,6 L137,22 M129,14 L145,14" stroke="#fff" stroke-width="2"/>
 <path d="M134,8 L137,4 L140,8 Z M134,20 L137,24 L140,20 Z M131,11 L127,14 L131,17 Z M143,11 L147,14 L143,17 Z" fill="#fff"/>
 <path d="M178,11 A7,7 0 1 0 179,16" fill="none" stroke="#fff" stroke-width="2.2"/>
 <path d="M174,10 L181,5 L181,12 Z" fill="#fff"/>
 <path d="M199,6 L203,10 M214,6 L210,10 M199,23 L203,19 M214,23 L210,19 M198,5 L198,9 M198,5 L202,5 M215,5 L215,9 M215,5 L211,5 M198,24 L198,20 M198,24 L202,24 M215,24 L215,20 M215,24 L211,24" stroke="#fff" stroke-width="1.2"/>
 <path d="M232,13 L246,9 L252,10 L252,15 L238,21 L232,20 Z" fill="#fff"/>
 <path d="M232,13 L238,14 L252,10 M238,14 L238,21" stroke="#999" stroke-width="0.8" fill="none"/>
</svg>
<div class="a" style="left:1186px;top:164px;font-size:12px;line-height:14px;color:#fff;font-weight:bold">Solid</div>
<div class="a" style="left:1227px;top:164px;font-size:12px;line-height:14px;color:#fff">Transparent</div>
<div class="a" style="left:1305px;top:164px;font-size:12px;line-height:14px;color:#fff">Wireframe</div>

<div class="a" style="left:1121px;top:205px;font-size:12px;line-height:14px;color:#f17024;font-weight:bold;white-space:nowrap;letter-spacing:-0.2px">Production cost</div><div class="a" style="left:1216px;top:205px;font-size:12px;line-height:14px;color:#111;white-space:nowrap">-</div><div class="a" style="left:1225px;top:205px;font-size:12px;line-height:14px;color:#111;font-weight:bold;white-space:nowrap">43 €</div>

<!-- panel header -->
<div class="a" style="left:1393px;top:164px;font-size:12px;line-height:14px;color:#fff">C</div>
<div class="a" style="left:1410px;top:164px;font-size:12px;line-height:14px;color:#fff">[Bearing member]</div>
<div class="a" style="left:1836px;top:164px;font-size:12px;line-height:14px;color:#fff;font-weight:bold">Copy</div>
<div class="a" style="left:1873px;top:164px;font-size:12px;line-height:14px;color:#fff;font-weight:bold">Delete</div>

<!-- sections -->
<div class="a tri" style="left:1400px;top:204px"></div>
<div class="a sec" style="left:1427px;top:201px">Properties</div>
<div class="a tri" style="left:1400px;top:329px"></div>
<div class="a sec" style="left:1427px;top:326px">Position</div>
<div class="a tri" style="left:1400px;top:550px"></div>
<div class="a sec" style="left:1427px;top:547px">Model</div>

<div class="a lbl" style="left:1427px;top:228px">Cross-section</div>
<div class="a lbl" style="left:1427px;top:252px">Mirror Y</div>
<div class="a lbl" style="left:1427px;top:276px">Mirror Z</div>
<div class="a lbl" style="left:1427px;top:300px">Geometrical type</div>
<div class="a lbl" style="left:1427px;top:353px">Defined by</div>
<div class="a lbl" style="left:1427px;top:377px">β – Direction [°]</div>
<div class="a lbl" style="left:1427px;top:401px">γ - Pitch [°]</div>
<div class="a lbl" style="left:1427px;top:425px">α - Rotation [°]</div>
<div class="a lbl" style="left:1427px;top:449px">Offset ex [mm]</div>
<div class="a lbl" style="left:1427px;top:473px">Offset ey [mm]</div>
<div class="a lbl" style="left:1427px;top:497px">Offset ez [mm]</div>
<div class="a lbl" style="left:1427px;top:521px">Align</div>
<div class="a lbl" style="left:1427px;top:574px">Model type</div>
<div class="a lbl" style="left:1427px;top:598px">Forces in</div>

<div class="a fld" style="top:223px;width:332px">1 - CON1 (HEA200)<div class="a dd" style="left:319px;top:8px"></div></div>
<div class="a" style="left:1862px;top:223px;width:21px;height:22px;background:#a0a0a0">
 <svg class="a" style="left:0;top:0" width="21" height="22"><path d="M14,4 L17,7 L8,17 L4,18 L5,14 Z" fill="#fff"/><path d="M13,5 L16,8" stroke="#a0a0a0" stroke-width="0.8"/></svg></div>
<div class="a" style="left:1887px;top:223px;width:22px;height:22px;background:#a0a0a0">
 <svg class="a" style="left:0;top:0" width="22" height="22"><path d="M11,4 L11,18 M4,11 L18,11" stroke="#fff" stroke-width="3.2"/></svg></div>
<div class="a" style="left:1532px;top:252px;width:11px;height:11px;background:#e6e6e6;border-radius:2px"></div>
<div class="a" style="left:1532px;top:276px;width:11px;height:11px;background:#e6e6e6;border-radius:2px"></div>
<div class="a fld" style="top:295px;height:21px">Continuous<div class="a dd" style="left:369px;top:8px"></div></div>
<div class="a fld" style="top:348px;height:21px">Rotations<div class="a dd" style="left:369px;top:8px"></div></div>
<div class="a fld t" style="top:372px;height:21px">0.0</div>
<div class="a fld t" style="top:396px;height:21px">90.0</div>
<div class="a fld t" style="top:420px;height:21px">0.0</div>
<div class="a fld t" style="top:444px;height:21px">0.0</div>
<div class="a fld t" style="top:468px;height:21px">0.0</div>
<div class="a fld t" style="top:492px;height:21px">0.0</div>
<div class="a fld" style="top:516px;height:21px">In node<div class="a dd" style="left:369px;top:8px"></div></div>
<div class="a fld" style="top:569px;height:21px">N-Vy-Vz-Mx-My-Mz<div class="a dd" style="left:369px;top:8px"></div></div>
<div class="a fld" style="top:593px;height:21px">Node<div class="a dd" style="left:369px;top:8px"></div></div>

<div class="a" style="left:1393px;top:646px;width:400px;font-size:11.5px;line-height:15px;color:#444;white-space:nowrap">One member of the joint is considered as 'bearing'. The other ones<br>are 'connected'. The support in analysis model is applied on the<br>bearing member.</div>

<!-- tree -->
<div class="a" style="left:1258px;top:308px;font-size:12.5px;line-height:14px;color:#333;font-weight:bold">CON1</div>
<svg class="a" style="left:1256px;top:332px" width="8" height="150">
 <path d="M6,1 L6,7 L0,7 Z" fill="#333"/><path d="M6,89 L6,95 L0,95 Z" fill="#333"/><path d="M6,133 L6,139 L0,139 Z" fill="#333"/>
</svg>
<div class="a" style="left:1279px;top:330px;font-size:12.5px;line-height:14px;color:#333;font-weight:bold">Members</div>
<div class="a" style="left:1279px;top:418px;font-size:12.5px;line-height:14px;color:#333;font-weight:bold">Load effects</div>
<div class="a" style="left:1279px;top:462px;font-size:12.5px;line-height:14px;color:#333;font-weight:bold">Operations</div>
<svg class="a" style="left:1269px;top:347px" width="94" height="21"><path d="M0,0 L78,0 L93,10.5 L78,21 L0,21 Z" fill="#f17024"/></svg>
<div class="a" style="left:1306px;top:352px;font-size:12.5px;line-height:14px;color:#fff;text-decoration:underline">C</div>
<div class="a" style="left:1306px;top:374px;font-size:12.5px;line-height:14px;color:#333">B1</div>
<div class="a" style="left:1306px;top:396px;font-size:12.5px;line-height:14px;color:#333">B2</div>
<div class="a" style="left:1306px;top:440px;font-size:12.5px;line-height:14px;color:#333">LE1</div>
<div class="a" style="left:1306px;top:484px;font-size:12.5px;line-height:14px;color:#333">EP1</div>
<div class="a" style="left:1306px;top:506px;font-size:12.5px;line-height:14px;color:#333">STIFF1</div>
<svg class="a" style="left:1278px;top:348px" width="16" height="180">
 <g><rect x="1" y="4" width="11" height="11" rx="2" fill="#e0e0e0"/><path d="M3,9 L5.5,13 L11,3" fill="none" stroke="#f7941d" stroke-width="2"/></g>
 <g transform="translate(0,22)"><rect x="1" y="4" width="11" height="11" rx="2" fill="#e0e0e0"/><path d="M3,9 L5.5,13 L11,3" fill="none" stroke="#f7941d" stroke-width="2"/></g>
 <g transform="translate(0,44)"><rect x="1" y="4" width="11" height="11" rx="2" fill="#e0e0e0"/><path d="M3,9 L5.5,13 L11,3" fill="none" stroke="#f7941d" stroke-width="2"/></g>
 <g transform="translate(0,88)"><rect x="1" y="4" width="11" height="11" rx="2" fill="#e0e0e0"/><path d="M3,9 L5.5,13 L11,3" fill="none" stroke="#f7941d" stroke-width="2"/></g>
 <g transform="translate(0,132)"><rect x="1" y="4" width="11" height="11" rx="2" fill="#e0e0e0"/><path d="M3,9 L5.5,13 L11,3" fill="none" stroke="#f7941d" stroke-width="2"/></g>
 <g transform="translate(0,154)"><rect x="1" y="4" width="11" height="11" rx="2" fill="#e0e0e0"/><path d="M3,9 L5.5,13 L11,3" fill="none" stroke="#f7941d" stroke-width="2"/></g>
</svg>

<!-- status -->
<div class="a" style="left:6px;top:1103px;font-size:11.65px;line-height:14px;color:#111;white-space:nowrap">C-Bottom flange 1: Cross-section CON1(HEA200), Material S 355, Thickness 10.0 mm</div>
<div class="a" style="left:23px;top:1131px;font-size:12px;line-height:14px;white-space:nowrap;color:#999">Design code:</div>
<div class="a" style="left:99px;top:1131px;font-size:12px;line-height:14px;white-space:nowrap;color:#fff;font-weight:bold;letter-spacing:-0.3px">EN</div>
<div class="a" style="left:134px;top:1131px;font-size:12px;line-height:14px;white-space:nowrap;color:#999">Analysis:</div>
<div class="a" style="left:185px;top:1131px;font-size:12px;line-height:14px;white-space:nowrap;color:#fff;font-weight:bold;letter-spacing:-0.4px">Stress, strain</div>
<div class="a" style="left:276px;top:1131px;font-size:12px;line-height:14px;white-space:nowrap;color:#999;letter-spacing:-0.1px">Load effects:</div>
<div class="a" style="left:353px;top:1131px;font-size:12px;line-height:14px;white-space:nowrap;color:#fff;font-weight:bold;letter-spacing:-0.4px">In equilibrium</div>
<div class="a" style="left:450px;top:1131px;font-size:12px;line-height:14px;white-space:nowrap;color:#999">Units:</div>
<div class="a" style="left:490px;top:1131px;font-size:12px;line-height:14px;white-space:nowrap;color:#fff;font-weight:bold">mm</div>
<div class="a" style="left:1797px;top:1131px;font-size:12px;line-height:14px;white-space:nowrap;color:#f17024">www.<span style="color:#fff">ideastatica</span>.com</div>

<!-- context menu -->
<div class="a" style="left:750px;top:382px;width:274px;height:214px;background:rgba(0,0,0,0.42);filter:blur(1.5px)"></div>
<div class="a" style="left:747px;top:379px;width:274px;height:214px;background:#f5f5f5;border:1px solid #a0a0a0"></div>
<div class="a" style="left:778px;top:380px;width:1px;height:212px;background:#e2e2e2"></div>
<div class="a" style="left:786px;top:383px;width:131px;height:22px;background:#e4e4e4;font-size:12px;line-height:22px;color:#111;padding-left:7px">1 - CON1 (HEA200)<div class="a dd" style="left:118px;top:8px"></div></div>
<div class="a" style="left:920px;top:383px;width:18px;height:22px;background:#a8a8a8">
 <svg class="a" style="left:0;top:0" width="18" height="22"><path d="M12,5 L15,8 L7,17 L3,18 L4,14 Z" fill="#fff"/></svg></div>
<div class="a" style="left:945px;top:383px;width:22px;height:22px;background:#a8a8a8">
 <svg class="a" style="left:0;top:0" width="22" height="22"><path d="M11,4 L11,18 M4,11 L18,11" stroke="#fff" stroke-width="3.2"/></svg></div>
<div class="a" style="left:938px;top:374px;width:36px;height:37px;border:4px solid #ff0000;border-radius:7px"></div>
<div class="a" style="left:716px;top:346px;width:46px;height:46px;border:4px solid #ff0000;border-radius:7px"></div>
<div class="a" style="left:786px;top:408px;font-size:12px;line-height:14px;color:#111;font-weight:bold">Member C</div>
<div class="a" style="left:781px;top:428px;width:236px;height:1px;background:#ccc"></div>
<div class="a" style="left:786px;top:436px;font-size:12px;line-height:14px;color:#111">Connect to...</div>
<div class="a" style="left:786px;top:458px;font-size:12px;line-height:14px;color:#111">Anchor...</div>
<div class="a" style="left:786px;top:480px;font-size:12px;line-height:14px;color:#111">Modify...</div>
<div class="a" style="left:786px;top:502px;font-size:12px;line-height:14px;color:#111">Clean</div>
<div class="a" style="left:781px;top:521px;width:236px;height:1px;background:#ccc"></div>
<div class="a" style="left:786px;top:529px;font-size:12px;line-height:14px;color:#111">Set bearing</div>
<div class="a" style="left:786px;top:551px;font-size:12px;line-height:14px;color:#111">Create section</div>
<div class="a" style="left:786px;top:573px;font-size:12px;line-height:14px;color:#999">Delete section</div>

<!-- nav cube -->
<svg class="a" style="left:0;top:0" width="1376" height="300">
 <ellipse cx="1316.6" cy="264" rx="36" ry="17" fill="none" stroke="#e2e2e2" stroke-width="9.5"/>
 <path d="M1287.5,228.3 L1310,215.8 L1343.3,222.5 L1340,254.2 L1324.2,275 L1290.8,262.5 Z" fill="#a4a4a4"/>
 <path d="M1287.5,228.3 L1310,215.8 L1343.3,222.5 L1311.7,236.7 Z" fill="#b0b0b0"/>
 <path d="M1287.5,228.3 L1310,215.8 L1343.3,222.5 L1340,254.2 L1324.2,275 L1290.8,262.5 Z M1287.5,228.3 L1311.7,236.7 L1343.3,222.5 M1311.7,236.7 L1324.2,275 M1310,215.8 L1310.8,245.8 L1290.8,262.5 M1310.8,245.8 L1340,254.2" fill="none" stroke="#808080" stroke-width="0.9"/>
 <path d="M1279,247 L1290,246 M1348,267 L1360,271 M1287,285 L1299,277" stroke="#888" stroke-width="1.2"/>
 <path d="M1316,226 L1320,227 M1334,249 L1335,244 M1306,253 L1309,256" stroke="#fff" stroke-width="1"/>
</svg>


</body></html>
